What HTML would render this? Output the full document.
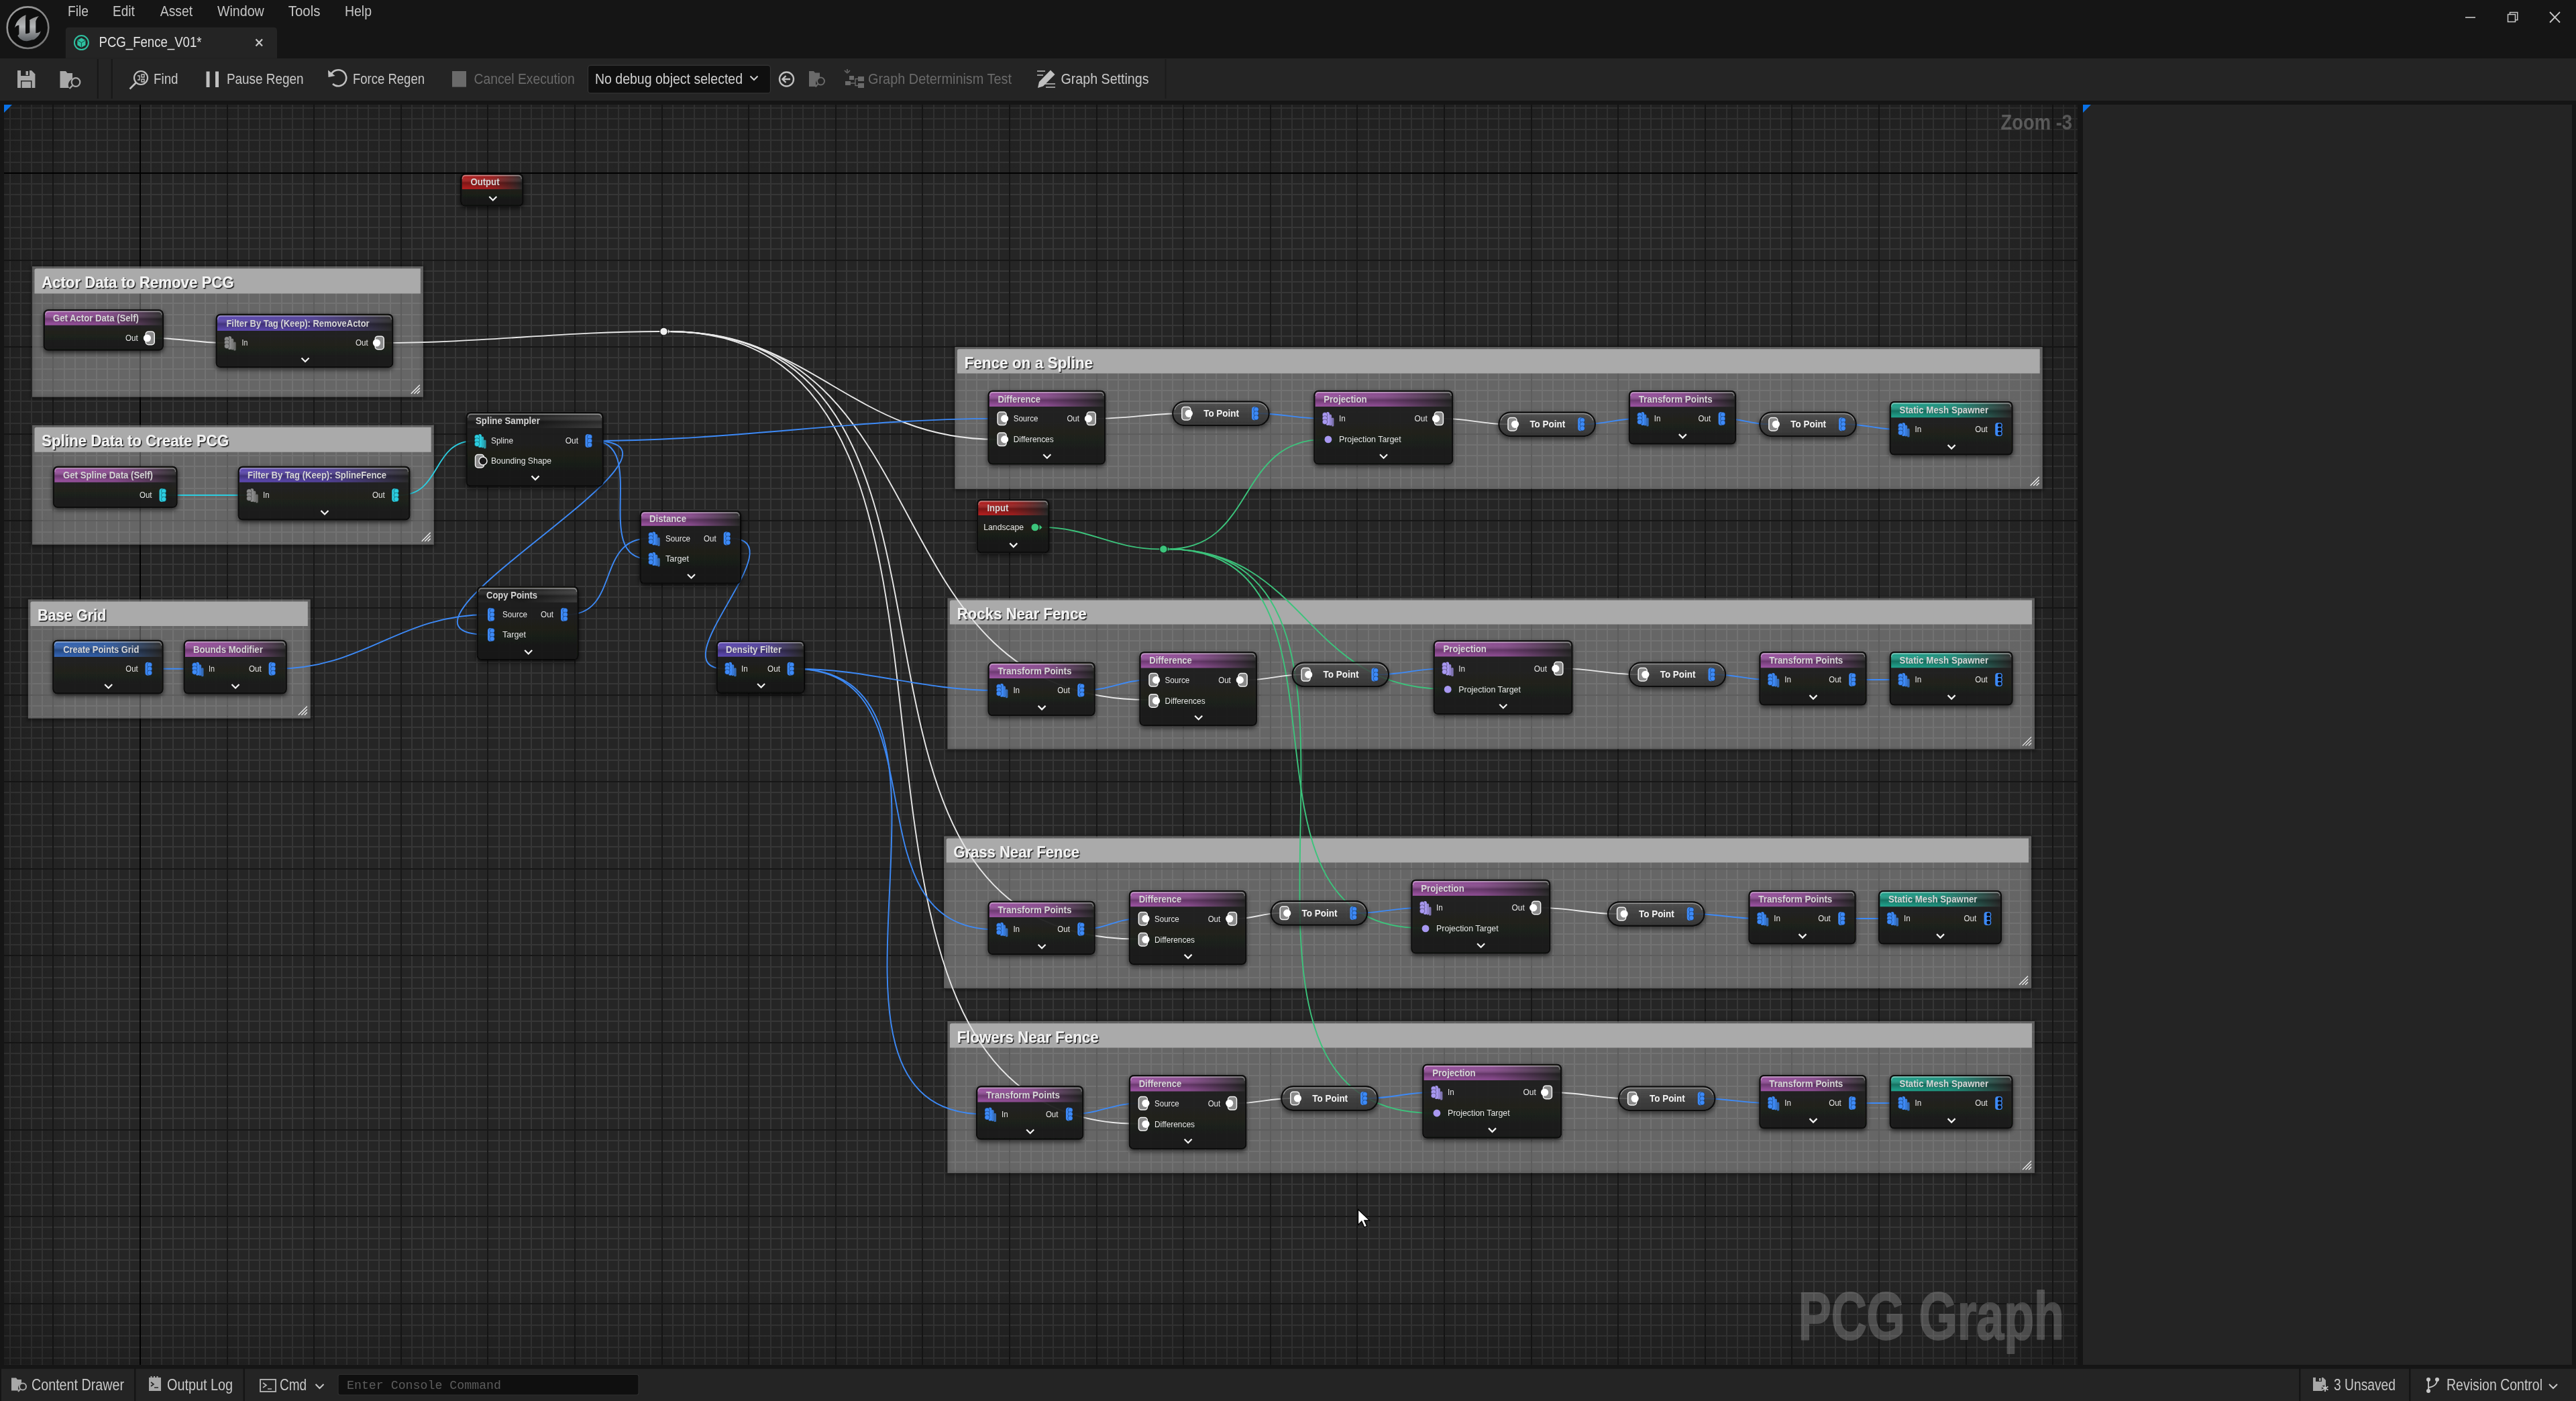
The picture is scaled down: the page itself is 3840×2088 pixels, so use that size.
<!DOCTYPE html>
<html><head><meta charset="utf-8"><title>PCG_Fence_V01</title>
<style>html,body{margin:0;padding:0;background:#151515;overflow:hidden}svg{display:block;will-change:transform}text{font-family:"Liberation Sans",sans-serif;white-space:pre}</style>
</head><body>
<svg width="3840" height="2088" viewBox="0 0 3840 2088">
<defs>
<radialGradient id="vign" cx="0.5" cy="0.5" r="0.75">
<stop offset="0.6" stop-color="#000" stop-opacity="0"/><stop offset="1" stop-color="#000" stop-opacity="0.25"/>
</radialGradient>
<filter id="nshadow" x="-20%" y="-30%" width="140%" height="170%"><feDropShadow dx="0" dy="3" stdDeviation="3.5" flood-color="#000" flood-opacity="0.75"/></filter>
<filter id="tshadow" x="-5%" y="-30%" width="110%" height="160%"><feDropShadow dx="1.5" dy="1.5" stdDeviation="0.6" flood-color="#000" flood-opacity="0.85"/></filter>
<filter id="gblur" x="-5%" y="-5%" width="110%" height="110%"><feGaussianBlur stdDeviation="2.5"/></filter>
<filter id="gshadow" x="-5%" y="-5%" width="110%" height="110%"><feDropShadow dx="0" dy="2" stdDeviation="3" flood-color="#000" flood-opacity="0.6"/></filter>
</defs>
<rect x="0.0" y="0.0" width="3840.0" height="2088.0" fill="#151515"/>
<rect x="0.0" y="87.0" width="3840.0" height="63.0" fill="#242424"/>
<path d="M97.8,86.7 V45.8 Q97.8,40.8 102.8,40.8 H408 Q413,40.8 413,45.8 V86.7 Z" fill="#242424"/>
<rect x="6.0" y="156.0" width="3091.0" height="1878.0" fill="#252525"/>
<path d="M14,156h2v1878h-2zM30,156h2v1878h-2zM46,156h2v1878h-2zM62,156h2v1878h-2zM95,156h2v1878h-2zM111,156h2v1878h-2zM127,156h2v1878h-2zM143,156h2v1878h-2zM159,156h2v1878h-2zM176,156h2v1878h-2zM192,156h2v1878h-2zM224,156h2v1878h-2zM240,156h2v1878h-2zM257,156h2v1878h-2zM273,156h2v1878h-2zM289,156h2v1878h-2zM305,156h2v1878h-2zM321,156h2v1878h-2zM354,156h2v1878h-2zM370,156h2v1878h-2zM386,156h2v1878h-2zM402,156h2v1878h-2zM419,156h2v1878h-2zM435,156h2v1878h-2zM451,156h2v1878h-2zM483,156h2v1878h-2zM500,156h2v1878h-2zM516,156h2v1878h-2zM532,156h2v1878h-2zM548,156h2v1878h-2zM564,156h2v1878h-2zM581,156h2v1878h-2zM613,156h2v1878h-2zM629,156h2v1878h-2zM645,156h2v1878h-2zM662,156h2v1878h-2zM678,156h2v1878h-2zM694,156h2v1878h-2zM710,156h2v1878h-2zM743,156h2v1878h-2zM759,156h2v1878h-2zM775,156h2v1878h-2zM791,156h2v1878h-2zM807,156h2v1878h-2zM824,156h2v1878h-2zM840,156h2v1878h-2zM872,156h2v1878h-2zM888,156h2v1878h-2zM905,156h2v1878h-2zM921,156h2v1878h-2zM937,156h2v1878h-2zM953,156h2v1878h-2zM969,156h2v1878h-2zM1002,156h2v1878h-2zM1018,156h2v1878h-2zM1034,156h2v1878h-2zM1050,156h2v1878h-2zM1067,156h2v1878h-2zM1083,156h2v1878h-2zM1099,156h2v1878h-2zM1131,156h2v1878h-2zM1148,156h2v1878h-2zM1164,156h2v1878h-2zM1180,156h2v1878h-2zM1196,156h2v1878h-2zM1212,156h2v1878h-2zM1229,156h2v1878h-2zM1261,156h2v1878h-2zM1277,156h2v1878h-2zM1293,156h2v1878h-2zM1310,156h2v1878h-2zM1326,156h2v1878h-2zM1342,156h2v1878h-2zM1358,156h2v1878h-2zM1391,156h2v1878h-2zM1407,156h2v1878h-2zM1423,156h2v1878h-2zM1439,156h2v1878h-2zM1455,156h2v1878h-2zM1472,156h2v1878h-2zM1488,156h2v1878h-2zM1520,156h2v1878h-2zM1536,156h2v1878h-2zM1553,156h2v1878h-2zM1569,156h2v1878h-2zM1585,156h2v1878h-2zM1601,156h2v1878h-2zM1617,156h2v1878h-2zM1650,156h2v1878h-2zM1666,156h2v1878h-2zM1682,156h2v1878h-2zM1698,156h2v1878h-2zM1715,156h2v1878h-2zM1731,156h2v1878h-2zM1747,156h2v1878h-2zM1779,156h2v1878h-2zM1796,156h2v1878h-2zM1812,156h2v1878h-2zM1828,156h2v1878h-2zM1844,156h2v1878h-2zM1860,156h2v1878h-2zM1877,156h2v1878h-2zM1909,156h2v1878h-2zM1925,156h2v1878h-2zM1941,156h2v1878h-2zM1958,156h2v1878h-2zM1974,156h2v1878h-2zM1990,156h2v1878h-2zM2006,156h2v1878h-2zM2039,156h2v1878h-2zM2055,156h2v1878h-2zM2071,156h2v1878h-2zM2087,156h2v1878h-2zM2103,156h2v1878h-2zM2120,156h2v1878h-2zM2136,156h2v1878h-2zM2168,156h2v1878h-2zM2184,156h2v1878h-2zM2201,156h2v1878h-2zM2217,156h2v1878h-2zM2233,156h2v1878h-2zM2249,156h2v1878h-2zM2265,156h2v1878h-2zM2298,156h2v1878h-2zM2314,156h2v1878h-2zM2330,156h2v1878h-2zM2346,156h2v1878h-2zM2363,156h2v1878h-2zM2379,156h2v1878h-2zM2395,156h2v1878h-2zM2427,156h2v1878h-2zM2444,156h2v1878h-2zM2460,156h2v1878h-2zM2476,156h2v1878h-2zM2492,156h2v1878h-2zM2508,156h2v1878h-2zM2525,156h2v1878h-2zM2557,156h2v1878h-2zM2573,156h2v1878h-2zM2589,156h2v1878h-2zM2606,156h2v1878h-2zM2622,156h2v1878h-2zM2638,156h2v1878h-2zM2654,156h2v1878h-2zM2687,156h2v1878h-2zM2703,156h2v1878h-2zM2719,156h2v1878h-2zM2735,156h2v1878h-2zM2751,156h2v1878h-2zM2768,156h2v1878h-2zM2784,156h2v1878h-2zM2816,156h2v1878h-2zM2832,156h2v1878h-2zM2849,156h2v1878h-2zM2865,156h2v1878h-2zM2881,156h2v1878h-2zM2897,156h2v1878h-2zM2913,156h2v1878h-2zM2946,156h2v1878h-2zM2962,156h2v1878h-2zM2978,156h2v1878h-2zM2994,156h2v1878h-2zM3011,156h2v1878h-2zM3027,156h2v1878h-2zM3043,156h2v1878h-2zM3075,156h2v1878h-2zM3092,156h2v1878h-2zM6,160h3091v2h-3091zM6,176h3091v2h-3091zM6,192h3091v2h-3091zM6,208h3091v2h-3091zM6,225h3091v2h-3091zM6,241h3091v2h-3091zM6,273h3091v2h-3091zM6,289h3091v2h-3091zM6,306h3091v2h-3091zM6,322h3091v2h-3091zM6,338h3091v2h-3091zM6,354h3091v2h-3091zM6,370h3091v2h-3091zM6,403h3091v2h-3091zM6,419h3091v2h-3091zM6,435h3091v2h-3091zM6,451h3091v2h-3091zM6,468h3091v2h-3091zM6,484h3091v2h-3091zM6,500h3091v2h-3091zM6,532h3091v2h-3091zM6,549h3091v2h-3091zM6,565h3091v2h-3091zM6,581h3091v2h-3091zM6,597h3091v2h-3091zM6,613h3091v2h-3091zM6,630h3091v2h-3091zM6,662h3091v2h-3091zM6,678h3091v2h-3091zM6,694h3091v2h-3091zM6,711h3091v2h-3091zM6,727h3091v2h-3091zM6,743h3091v2h-3091zM6,759h3091v2h-3091zM6,792h3091v2h-3091zM6,808h3091v2h-3091zM6,824h3091v2h-3091zM6,840h3091v2h-3091zM6,856h3091v2h-3091zM6,873h3091v2h-3091zM6,889h3091v2h-3091zM6,921h3091v2h-3091zM6,937h3091v2h-3091zM6,954h3091v2h-3091zM6,970h3091v2h-3091zM6,986h3091v2h-3091zM6,1002h3091v2h-3091zM6,1018h3091v2h-3091zM6,1051h3091v2h-3091zM6,1067h3091v2h-3091zM6,1083h3091v2h-3091zM6,1099h3091v2h-3091zM6,1116h3091v2h-3091zM6,1132h3091v2h-3091zM6,1148h3091v2h-3091zM6,1180h3091v2h-3091zM6,1197h3091v2h-3091zM6,1213h3091v2h-3091zM6,1229h3091v2h-3091zM6,1245h3091v2h-3091zM6,1261h3091v2h-3091zM6,1278h3091v2h-3091zM6,1310h3091v2h-3091zM6,1326h3091v2h-3091zM6,1342h3091v2h-3091zM6,1359h3091v2h-3091zM6,1375h3091v2h-3091zM6,1391h3091v2h-3091zM6,1407h3091v2h-3091zM6,1440h3091v2h-3091zM6,1456h3091v2h-3091zM6,1472h3091v2h-3091zM6,1488h3091v2h-3091zM6,1504h3091v2h-3091zM6,1521h3091v2h-3091zM6,1537h3091v2h-3091zM6,1569h3091v2h-3091zM6,1585h3091v2h-3091zM6,1602h3091v2h-3091zM6,1618h3091v2h-3091zM6,1634h3091v2h-3091zM6,1650h3091v2h-3091zM6,1666h3091v2h-3091zM6,1699h3091v2h-3091zM6,1715h3091v2h-3091zM6,1731h3091v2h-3091zM6,1747h3091v2h-3091zM6,1764h3091v2h-3091zM6,1780h3091v2h-3091zM6,1796h3091v2h-3091zM6,1828h3091v2h-3091zM6,1845h3091v2h-3091zM6,1861h3091v2h-3091zM6,1877h3091v2h-3091zM6,1893h3091v2h-3091zM6,1909h3091v2h-3091zM6,1926h3091v2h-3091zM6,1958h3091v2h-3091zM6,1974h3091v2h-3091zM6,1990h3091v2h-3091zM6,2007h3091v2h-3091zM6,2023h3091v2h-3091z" fill="#363636"/>
<path d="M78,156h2v1878h-2zM338,156h2v1878h-2zM467,156h2v1878h-2zM597,156h2v1878h-2zM726,156h2v1878h-2zM856,156h2v1878h-2zM986,156h2v1878h-2zM1115,156h2v1878h-2zM1245,156h2v1878h-2zM1374,156h2v1878h-2zM1504,156h2v1878h-2zM1634,156h2v1878h-2zM1763,156h2v1878h-2zM1893,156h2v1878h-2zM2022,156h2v1878h-2zM2152,156h2v1878h-2zM2282,156h2v1878h-2zM2411,156h2v1878h-2zM2541,156h2v1878h-2zM2670,156h2v1878h-2zM2800,156h2v1878h-2zM2930,156h2v1878h-2zM3059,156h2v1878h-2zM6,387h3091v2h-3091zM6,516h3091v2h-3091zM6,646h3091v2h-3091zM6,775h3091v2h-3091zM6,905h3091v2h-3091zM6,1035h3091v2h-3091zM6,1164h3091v2h-3091zM6,1294h3091v2h-3091zM6,1423h3091v2h-3091zM6,1553h3091v2h-3091zM6,1683h3091v2h-3091zM6,1812h3091v2h-3091zM6,1942h3091v2h-3091z" fill="#171717"/>
<path d="M208,156h2v1878h-2zM6,257h3091v2h-3091z" fill="#000000"/>
<rect x="3105.0" y="156.0" width="729.0" height="1878.0" fill="#242424"/>
<rect x="2.0" y="2040.0" width="3838.0" height="48.0" fill="#242424"/>
<defs><linearGradient id="hg_mag" x1="0" y1="0" x2="1" y2="0"><stop offset="0" stop-color="#9a52a0"/><stop offset="0.5" stop-color="#9a52a0" stop-opacity="0.85"/><stop offset="1" stop-color="#2c2c2c"/></linearGradient><linearGradient id="hg_ind" x1="0" y1="0" x2="1" y2="0"><stop offset="0" stop-color="#5c48b0"/><stop offset="0.5" stop-color="#5c48b0" stop-opacity="0.85"/><stop offset="1" stop-color="#2c2c2c"/></linearGradient><linearGradient id="hg_blue" x1="0" y1="0" x2="1" y2="0"><stop offset="0" stop-color="#3364b4"/><stop offset="0.5" stop-color="#3364b4" stop-opacity="0.85"/><stop offset="1" stop-color="#2c2c2c"/></linearGradient><linearGradient id="hg_teal" x1="0" y1="0" x2="1" y2="0"><stop offset="0" stop-color="#1fa08a"/><stop offset="0.5" stop-color="#1fa08a" stop-opacity="0.85"/><stop offset="1" stop-color="#2c2c2c"/></linearGradient><linearGradient id="hg_red" x1="0" y1="0" x2="1" y2="0"><stop offset="0" stop-color="#b01e1e"/><stop offset="0.5" stop-color="#b01e1e" stop-opacity="0.85"/><stop offset="1" stop-color="#2c2c2c"/></linearGradient><linearGradient id="hg_grey" x1="0" y1="0" x2="1" y2="0"><stop offset="0" stop-color="#262626"/><stop offset="0.45" stop-color="#1c1c1c"/><stop offset="1" stop-color="#3c3c3c"/></linearGradient><linearGradient id="hgv" x1="0" y1="0" x2="0" y2="1"><stop offset="0" stop-color="#fff" stop-opacity="0.25"/><stop offset="0.15" stop-color="#fff" stop-opacity="0"/><stop offset="0.55" stop-color="#000" stop-opacity="0.28"/><stop offset="0.9" stop-color="#000" stop-opacity="0.02"/><stop offset="1" stop-color="#000" stop-opacity="0"/></linearGradient><linearGradient id="nbody" x1="0" y1="0" x2="0" y2="1"><stop offset="0" stop-color="#222320"/><stop offset="1" stop-color="#181917"/></linearGradient><linearGradient id="tpbody" x1="0" y1="0" x2="0" y2="1"><stop offset="0" stop-color="#565656"/><stop offset="0.5" stop-color="#3e3e3e"/><stop offset="1" stop-color="#303030"/></linearGradient></defs>
<defs><linearGradient id="shL" x1="0" y1="0" x2="1" y2="0"><stop offset="0" stop-color="#000" stop-opacity="0.14"/><stop offset="1" stop-color="#000" stop-opacity="0"/></linearGradient><linearGradient id="shR" x1="1" y1="0" x2="0" y2="0"><stop offset="0" stop-color="#000" stop-opacity="0.16"/><stop offset="1" stop-color="#000" stop-opacity="0"/></linearGradient><linearGradient id="shT" x1="0" y1="0" x2="0" y2="1"><stop offset="0" stop-color="#000" stop-opacity="0.14"/><stop offset="1" stop-color="#000" stop-opacity="0"/></linearGradient><linearGradient id="shB" x1="0" y1="1" x2="0" y2="0"><stop offset="0" stop-color="#000" stop-opacity="0.18"/><stop offset="1" stop-color="#000" stop-opacity="0"/></linearGradient></defs>
<rect x="6.0" y="156.0" width="124.0" height="1877.5" fill="url(#shL)"/>
<rect x="2960.0" y="156.0" width="137.0" height="1877.5" fill="url(#shR)"/>
<rect x="6.0" y="156.0" width="3091.0" height="134.0" fill="url(#shT)"/>
<rect x="6.0" y="1900.0" width="3091.0" height="133.5" fill="url(#shB)"/>
<rect x="48.5" y="398.5" width="581.8" height="193.7" fill="none" stroke="#000" stroke-opacity="0.45" stroke-width="5" filter="url(#gblur)"/>
<rect x="48.0" y="397.0" width="582.8" height="194.7" fill="#ffffff" fill-opacity="0.30"/>
<path d="M51.5,437.6 V403.0 Q51.5,400.2 54.3,400.2 H626.8 V437.6 Z" fill="#aaaaaa"/>
<text x="62.0" y="428.8" font-size="24.27" font-weight="700" fill="#f2f2f2" textLength="286.6" lengthAdjust="spacingAndGlyphs" filter="url(#tshadow)">Actor Data to Remove PCG</text>
<path d="M612.8,586.7 L625.8,573.7 M617.3,586.7 L625.8,578.2 M621.8,586.7 L625.8,582.7" stroke="#f0f0f0" stroke-width="1.3"/>
<rect x="48.5" y="635.0" width="597.7" height="177.2" fill="none" stroke="#000" stroke-opacity="0.45" stroke-width="5" filter="url(#gblur)"/>
<rect x="48.0" y="633.5" width="598.7" height="178.2" fill="#ffffff" fill-opacity="0.30"/>
<path d="M51.5,673.8 V639.5 Q51.5,636.7 54.3,636.7 H642.7 V673.8 Z" fill="#aaaaaa"/>
<text x="62.0" y="665.3" font-size="24.27" font-weight="700" fill="#f2f2f2" textLength="279.0" lengthAdjust="spacingAndGlyphs" filter="url(#tshadow)">Spline Data to Create PCG</text>
<path d="M628.7,806.7 L641.7,793.7 M633.2,806.7 L641.7,798.2 M637.7,806.7 L641.7,802.7" stroke="#f0f0f0" stroke-width="1.3"/>
<rect x="42.4" y="894.9" width="419.9" height="176.3" fill="none" stroke="#000" stroke-opacity="0.45" stroke-width="5" filter="url(#gblur)"/>
<rect x="41.9" y="893.4" width="420.9" height="177.3" fill="#ffffff" fill-opacity="0.30"/>
<path d="M45.4,933.0 V899.4 Q45.4,896.6 48.2,896.6 H458.8 V933.0 Z" fill="#aaaaaa"/>
<text x="55.9" y="925.2" font-size="24.27" font-weight="700" fill="#f2f2f2" textLength="102.3" lengthAdjust="spacingAndGlyphs" filter="url(#tshadow)">Base Grid</text>
<path d="M444.8,1065.7 L457.8,1052.7 M449.3,1065.7 L457.8,1057.2 M453.8,1065.7 L457.8,1061.7" stroke="#f0f0f0" stroke-width="1.3"/>
<rect x="1424.0" y="518.5" width="1620.2" height="210.7" fill="none" stroke="#000" stroke-opacity="0.45" stroke-width="5" filter="url(#gblur)"/>
<rect x="1423.5" y="517.0" width="1621.2" height="211.7" fill="#ffffff" fill-opacity="0.30"/>
<path d="M1427.0,556.4 V523.0 Q1427.0,520.2 1429.8,520.2 H3040.7 V556.4 Z" fill="#aaaaaa"/>
<text x="1437.5" y="548.8" font-size="24.27" font-weight="700" fill="#f2f2f2" textLength="191.5" lengthAdjust="spacingAndGlyphs" filter="url(#tshadow)">Fence on a Spline</text>
<path d="M3026.7,723.7 L3039.7,710.7 M3031.2,723.7 L3039.7,715.2 M3035.7,723.7 L3039.7,719.7" stroke="#f0f0f0" stroke-width="1.3"/>
<rect x="1412.9" y="892.9" width="1619.6" height="224.0" fill="none" stroke="#000" stroke-opacity="0.45" stroke-width="5" filter="url(#gblur)"/>
<rect x="1412.4" y="891.4" width="1620.6" height="225.0" fill="#ffffff" fill-opacity="0.30"/>
<path d="M1415.9,930.5 V897.4 Q1415.9,894.6 1418.7,894.6 H3029.0 V930.5 Z" fill="#aaaaaa"/>
<text x="1426.4" y="923.2" font-size="24.27" font-weight="700" fill="#f2f2f2" textLength="193.3" lengthAdjust="spacingAndGlyphs" filter="url(#tshadow)">Rocks Near Fence</text>
<path d="M3015.0,1111.4 L3028.0,1098.4 M3019.5,1111.4 L3028.0,1102.9 M3024.0,1111.4 L3028.0,1107.4" stroke="#f0f0f0" stroke-width="1.3"/>
<rect x="1407.7" y="1247.8" width="1619.8" height="225.5" fill="none" stroke="#000" stroke-opacity="0.45" stroke-width="5" filter="url(#gblur)"/>
<rect x="1407.2" y="1246.3" width="1620.8" height="226.5" fill="#ffffff" fill-opacity="0.30"/>
<path d="M1410.7,1285.6 V1252.3 Q1410.7,1249.5 1413.5,1249.5 H3024.0 V1285.6 Z" fill="#aaaaaa"/>
<text x="1421.2" y="1278.1" font-size="24.27" font-weight="700" fill="#f2f2f2" textLength="187.8" lengthAdjust="spacingAndGlyphs" filter="url(#tshadow)">Grass Near Fence</text>
<path d="M3010.0,1467.8 L3023.0,1454.8 M3014.5,1467.8 L3023.0,1459.3 M3019.0,1467.8 L3023.0,1463.8" stroke="#f0f0f0" stroke-width="1.3"/>
<rect x="1412.9" y="1523.5" width="1619.6" height="225.2" fill="none" stroke="#000" stroke-opacity="0.45" stroke-width="5" filter="url(#gblur)"/>
<rect x="1412.4" y="1522.0" width="1620.6" height="226.2" fill="#ffffff" fill-opacity="0.30"/>
<path d="M1415.9,1561.5 V1528.0 Q1415.9,1525.2 1418.7,1525.2 H3029.0 V1561.5 Z" fill="#aaaaaa"/>
<text x="1426.4" y="1553.8" font-size="24.27" font-weight="700" fill="#f2f2f2" textLength="211.3" lengthAdjust="spacingAndGlyphs" filter="url(#tshadow)">Flowers Near Fence</text>
<path d="M3015.0,1743.2 L3028.0,1730.2 M3019.5,1743.2 L3028.0,1734.7 M3024.0,1743.2 L3028.0,1739.2" stroke="#f0f0f0" stroke-width="1.3"/>
<path d="M231.0,504.0 C267.8,504.0 297.6,511.0 334.4,511.0" fill="none" stroke="#e8e8e8" stroke-width="1.9"/>
<path d="M573.0,511.0 C715.5,511.0 841.0,494.0 983.5,494.0" fill="none" stroke="#e8e8e8" stroke-width="1.9"/>
<path d="M995.5,494.0 C1212.6,494.0 1268.9,654.9 1486.0,654.9" fill="none" stroke="#e8e8e8" stroke-width="1.9"/>
<path d="M995.5,494.0 C1417.2,494.0 1289.8,1043.0 1711.5,1043.0" fill="none" stroke="#e8e8e8" stroke-width="1.9"/>
<path d="M995.5,494.0 C1530.8,494.0 1160.7,1399.5 1696.0,1399.5" fill="none" stroke="#e8e8e8" stroke-width="1.9"/>
<path d="M995.5,494.0 C1562.3,494.0 1129.2,1674.7 1696.0,1674.7" fill="none" stroke="#e8e8e8" stroke-width="1.9"/>
<path d="M248.7,738.0 C288.3,738.0 327.9,738.0 367.5,738.0" fill="none" stroke="#2ccde0" stroke-width="1.9"/>
<path d="M595.0,738.0 C659.4,738.0 642.9,657.0 707.3,657.0" fill="none" stroke="#2ccde0" stroke-width="1.9"/>
<path d="M227.0,996.8 C246.8,996.8 266.5,996.8 286.3,996.8" fill="none" stroke="#3d8af7" stroke-width="1.9"/>
<path d="M411.3,996.8 C543.5,996.8 594.8,916.0 727.0,916.0" fill="none" stroke="#3d8af7" stroke-width="1.9"/>
<path d="M883.0,657.0 C1087.0,657.0 523.0,946.0 727.0,946.0" fill="none" stroke="#3d8af7" stroke-width="1.9"/>
<path d="M883.0,657.0 C969.5,657.0 880.0,833.0 966.5,833.0" fill="none" stroke="#3d8af7" stroke-width="1.9"/>
<path d="M883.0,657.0 C1095.0,657.0 1274.0,623.9 1486.0,623.9" fill="none" stroke="#3d8af7" stroke-width="1.9"/>
<path d="M846.0,916.0 C924.0,916.0 888.5,802.5 966.5,802.5" fill="none" stroke="#3d8af7" stroke-width="1.9"/>
<path d="M1089.0,802.5 C1191.8,802.5 977.6,996.7 1080.4,996.7" fill="none" stroke="#3d8af7" stroke-width="1.9"/>
<path d="M1184.0,996.7 C1295.2,996.7 1374.2,1029.0 1485.4,1029.0" fill="none" stroke="#3d8af7" stroke-width="1.9"/>
<path d="M1184.0,996.7 C1414.1,996.7 1255.3,1385.5 1485.4,1385.5" fill="none" stroke="#3d8af7" stroke-width="1.9"/>
<path d="M1184.0,996.7 C1500.0,996.7 1152.0,1660.6 1468.0,1660.6" fill="none" stroke="#3d8af7" stroke-width="1.9"/>
<path d="M1553.0,785.9 C1622.3,785.9 1659.1,818.4 1728.4,818.4" fill="none" stroke="#3cc47c" stroke-width="1.9"/>
<path d="M1740.4,818.4 C1872.9,818.4 1842.0,654.9 1974.5,654.9" fill="none" stroke="#3cc47c" stroke-width="1.9"/>
<path d="M1740.4,818.4 C1947.3,818.4 1945.9,1026.7 2152.8,1026.7" fill="none" stroke="#3cc47c" stroke-width="1.9"/>
<path d="M1740.4,818.4 C2055.1,818.4 1804.9,1383.2 2119.6,1383.2" fill="none" stroke="#3cc47c" stroke-width="1.9"/>
<path d="M1740.4,818.4 C2152.6,818.4 1724.3,1659.0 2136.5,1659.0" fill="none" stroke="#3cc47c" stroke-width="1.9"/>
<path d="M1634.0,623.9 C1678.9,623.9 1716.1,616.3 1761.0,616.3" fill="none" stroke="#e8e8e8" stroke-width="1.9"/>
<path d="M1876.2,616.3 C1910.4,616.3 1937.0,623.9 1971.2,623.9" fill="none" stroke="#3d8af7" stroke-width="1.9"/>
<path d="M2152.2,623.9 C2186.7,623.9 2212.7,632.3 2247.2,632.3" fill="none" stroke="#e8e8e8" stroke-width="1.9"/>
<path d="M2362.4,632.3 C2391.2,632.3 2411.7,624.0 2440.5,624.0" fill="none" stroke="#3d8af7" stroke-width="1.9"/>
<path d="M2571.5,624.0 C2595.8,624.0 2611.8,632.3 2636.1,632.3" fill="none" stroke="#3d8af7" stroke-width="1.9"/>
<path d="M2751.3,632.3 C2779.9,632.3 2800.8,640.0 2829.4,640.0" fill="none" stroke="#3d8af7" stroke-width="1.9"/>
<path d="M1616.2,1028.8 C1653.3,1028.8 1675.1,1013.4 1712.2,1013.4" fill="none" stroke="#3d8af7" stroke-width="1.9"/>
<path d="M1859.9,1013.4 C1889.1,1013.4 1910.2,1005.4 1939.4,1005.4" fill="none" stroke="#e8e8e8" stroke-width="1.9"/>
<path d="M2054.6,1005.4 C2089.2,1005.4 2114.9,996.4 2149.5,996.4" fill="none" stroke="#3d8af7" stroke-width="1.9"/>
<path d="M2330.5,996.4 C2370.5,996.4 2401.5,1005.3 2441.5,1005.3" fill="none" stroke="#e8e8e8" stroke-width="1.9"/>
<path d="M2556.7,1005.3 C2585.4,1005.3 2606.4,1013.0 2635.1,1013.0" fill="none" stroke="#3d8af7" stroke-width="1.9"/>
<path d="M2766.1,1013.0 C2787.2,1013.0 2808.3,1013.0 2829.4,1013.0" fill="none" stroke="#3d8af7" stroke-width="1.9"/>
<path d="M1616.2,1384.7 C1648.2,1384.7 1664.6,1369.2 1696.6,1369.2" fill="none" stroke="#3d8af7" stroke-width="1.9"/>
<path d="M1844.3,1369.2 C1868.1,1369.2 1883.6,1360.9 1907.4,1360.9" fill="none" stroke="#e8e8e8" stroke-width="1.9"/>
<path d="M2022.6,1360.9 C2056.5,1360.9 2082.4,1352.9 2116.3,1352.9" fill="none" stroke="#3d8af7" stroke-width="1.9"/>
<path d="M2297.3,1352.9 C2337.8,1352.9 2369.3,1362.0 2409.8,1362.0" fill="none" stroke="#e8e8e8" stroke-width="1.9"/>
<path d="M2525.0,1362.0 C2558.7,1362.0 2585.4,1369.0 2619.1,1369.0" fill="none" stroke="#3d8af7" stroke-width="1.9"/>
<path d="M2750.1,1369.0 C2771.0,1369.0 2791.9,1369.0 2812.8,1369.0" fill="none" stroke="#3d8af7" stroke-width="1.9"/>
<path d="M1598.8,1660.4 C1636.8,1660.4 1658.6,1644.3 1696.6,1644.3" fill="none" stroke="#3d8af7" stroke-width="1.9"/>
<path d="M1844.3,1644.3 C1873.0,1644.3 1894.4,1637.0 1923.1,1637.0" fill="none" stroke="#e8e8e8" stroke-width="1.9"/>
<path d="M2038.3,1637.0 C2072.9,1637.0 2098.6,1628.0 2133.2,1628.0" fill="none" stroke="#3d8af7" stroke-width="1.9"/>
<path d="M2314.2,1628.0 C2354.5,1628.0 2385.5,1637.3 2425.8,1637.3" fill="none" stroke="#e8e8e8" stroke-width="1.9"/>
<path d="M2541.0,1637.3 C2574.6,1637.3 2601.5,1644.0 2635.1,1644.0" fill="none" stroke="#3d8af7" stroke-width="1.9"/>
<path d="M2766.1,1644.0 C2787.2,1644.0 2808.3,1644.0 2829.4,1644.0" fill="none" stroke="#3d8af7" stroke-width="1.9"/>
<circle cx="989.5" cy="494.0" r="5.6" fill="#f0f0f0" stroke="#101010" stroke-opacity="0.7" stroke-width="1"/><path d="M995.7,490.2 L999.1,494.0 L995.7,497.8 Z" fill="#f0f0f0" stroke="#101010" stroke-opacity="0.6" stroke-width="0.8"/>
<circle cx="1734.4" cy="818.4" r="5.6" fill="#3cc47c" stroke="#101010" stroke-opacity="0.7" stroke-width="1"/><path d="M1740.6,814.6 L1744.0,818.4 L1740.6,822.2 Z" fill="#3cc47c" stroke="#101010" stroke-opacity="0.6" stroke-width="0.8"/>
<rect x="687.3" y="259.3" width="92.0" height="47.2" rx="6" fill="url(#nbody)" fill-opacity="0.85" stroke="#080808" stroke-width="1.7" filter="url(#nshadow)"/>
<path d="M688.8,282.0 V265.8 Q688.8,260.8 693.8,260.8 H772.8 Q777.8,260.8 777.8,265.8 V282.0 Z" fill="url(#hg_red)"/>
<path d="M688.8,282.0 V265.8 Q688.8,260.8 693.8,260.8 H772.8 Q777.8,260.8 777.8,265.8 V282.0 Z" fill="url(#hgv)"/>
<path d="M689.3,266.8 Q689.3,261.6 694.8,261.6 H771.8 Q777.3,261.6 777.3,266.8" fill="none" stroke="#ffffff" stroke-opacity="0.35" stroke-width="1.2"/>
<text x="701.5" y="276.0" font-size="14.97" font-weight="700" fill="#d6d6d6" textLength="43.0" lengthAdjust="spacingAndGlyphs">Output</text>
<path d="M729.3,293.0 L734.8,298.5 L740.3,293.0" fill="none" stroke="#f4f4f4" stroke-width="2.2"/>
<rect x="65.6" y="462.0" width="177.4" height="59.6" rx="6" fill="url(#nbody)" fill-opacity="0.85" stroke="#080808" stroke-width="1.7" filter="url(#nshadow)"/>
<path d="M67.1,484.8 V468.5 Q67.1,463.5 72.1,463.5 H236.5 Q241.5,463.5 241.5,468.5 V484.8 Z" fill="url(#hg_mag)"/>
<path d="M67.1,484.8 V468.5 Q67.1,463.5 72.1,463.5 H236.5 Q241.5,463.5 241.5,468.5 V484.8 Z" fill="url(#hgv)"/>
<path d="M67.6,469.5 Q67.6,464.3 73.1,464.3 H235.5 Q241.0,464.3 241.0,469.5" fill="none" stroke="#ffffff" stroke-opacity="0.35" stroke-width="1.2"/>
<text x="79.0" y="479.4" font-size="14.97" font-weight="700" fill="#d6d6d6" textLength="128.0" lengthAdjust="spacingAndGlyphs">Get Actor Data (Self)</text>
<text x="187.0" y="508.2" font-size="12.79" fill="#e6e6e6" textLength="18.7" lengthAdjust="spacingAndGlyphs">Out</text>
<rect x="217.2" y="494.2" width="13" height="19.5" rx="4" fill="#8a8a8a" stroke="#f2f2f2" stroke-width="1.5"/>
<circle cx="219.4" cy="504.0" r="5.6" fill="#ffffff"/>
<rect x="322.5" y="468.7" width="262.8" height="78.3" rx="6" fill="url(#nbody)" fill-opacity="0.85" stroke="#080808" stroke-width="1.7" filter="url(#nshadow)"/>
<path d="M324.0,493.0 V475.2 Q324.0,470.2 329.0,470.2 H578.8 Q583.8,470.2 583.8,475.2 V493.0 Z" fill="url(#hg_ind)"/>
<path d="M324.0,493.0 V475.2 Q324.0,470.2 329.0,470.2 H578.8 Q583.8,470.2 583.8,475.2 V493.0 Z" fill="url(#hgv)"/>
<path d="M324.5,476.2 Q324.5,471.0 330.0,471.0 H577.8 Q583.3,471.0 583.3,476.2" fill="none" stroke="#ffffff" stroke-opacity="0.35" stroke-width="1.2"/>
<text x="337.4" y="487.3" font-size="14.97" font-weight="700" fill="#d6d6d6" textLength="213.2" lengthAdjust="spacingAndGlyphs">Filter By Tag (Keep): RemoveActor</text>
<rect x="348.0" y="509.5" width="3.6" height="13" rx="1.5" fill="#8c8c8c" fill-opacity="0.7"/>
<rect x="344.2" y="504.5" width="4" height="17" rx="2" fill="#8c8c8c" fill-opacity="0.85"/>
<rect x="340.0" y="501.0" width="5" height="20" rx="2.5" fill="#8c8c8c"/>
<circle cx="338.2" cy="505.5" r="3.8" fill="#8c8c8c" stroke="#000" stroke-opacity="0.45" stroke-width="0.8"/>
<circle cx="338.2" cy="510.5" r="3.8" fill="#8c8c8c" stroke="#000" stroke-opacity="0.45" stroke-width="0.8"/>
<circle cx="338.2" cy="515.8" r="3.8" fill="#8c8c8c" stroke="#000" stroke-opacity="0.45" stroke-width="0.8"/>
<text x="360.5" y="515.4" font-size="12.79" fill="#e6e6e6" textLength="8.7" lengthAdjust="spacingAndGlyphs">In</text>
<text x="530.0" y="515.4" font-size="12.79" fill="#e6e6e6" textLength="18.8" lengthAdjust="spacingAndGlyphs">Out</text>
<rect x="559.2" y="501.2" width="13" height="19.5" rx="4" fill="#8a8a8a" stroke="#f2f2f2" stroke-width="1.5"/>
<circle cx="561.4" cy="511.0" r="5.6" fill="#ffffff"/>
<path d="M449.5,533.5 L455.0,539.0 L460.5,533.5" fill="none" stroke="#f4f4f4" stroke-width="2.2"/>
<rect x="79.8" y="695.7" width="183.8" height="60.1" rx="6" fill="url(#nbody)" fill-opacity="0.85" stroke="#080808" stroke-width="1.7" filter="url(#nshadow)"/>
<path d="M81.3,718.8 V702.2 Q81.3,697.2 86.3,697.2 H257.1 Q262.1,697.2 262.1,702.2 V718.8 Z" fill="url(#hg_mag)"/>
<path d="M81.3,718.8 V702.2 Q81.3,697.2 86.3,697.2 H257.1 Q262.1,697.2 262.1,702.2 V718.8 Z" fill="url(#hgv)"/>
<path d="M81.8,703.2 Q81.8,698.0 87.3,698.0 H256.1 Q261.6,698.0 261.6,703.2" fill="none" stroke="#ffffff" stroke-opacity="0.35" stroke-width="1.2"/>
<text x="94.0" y="713.2" font-size="14.97" font-weight="700" fill="#d6d6d6" textLength="134.0" lengthAdjust="spacingAndGlyphs">Get Spline Data (Self)</text>
<text x="208.0" y="742.4" font-size="12.79" fill="#e6e6e6" textLength="18.5" lengthAdjust="spacingAndGlyphs">Out</text>
<rect x="237.5" y="728.0" width="8" height="20" rx="4" fill="#2ccde0"/>
<circle cx="244.1" cy="732.0" r="3.7" fill="#2ccde0" stroke="#000" stroke-opacity="0.45" stroke-width="0.8"/>
<circle cx="244.1" cy="738.0" r="3.7" fill="#2ccde0" stroke="#000" stroke-opacity="0.45" stroke-width="0.8"/>
<circle cx="244.1" cy="744.0" r="3.7" fill="#2ccde0" stroke="#000" stroke-opacity="0.45" stroke-width="0.8"/>
<rect x="355.5" y="695.7" width="254.9" height="78.7" rx="6" fill="url(#nbody)" fill-opacity="0.85" stroke="#080808" stroke-width="1.7" filter="url(#nshadow)"/>
<path d="M357.0,718.8 V702.2 Q357.0,697.2 362.0,697.2 H603.9 Q608.9,697.2 608.9,702.2 V718.8 Z" fill="url(#hg_ind)"/>
<path d="M357.0,718.8 V702.2 Q357.0,697.2 362.0,697.2 H603.9 Q608.9,697.2 608.9,702.2 V718.8 Z" fill="url(#hgv)"/>
<path d="M357.5,703.2 Q357.5,698.0 363.0,698.0 H602.9 Q608.4,698.0 608.4,703.2" fill="none" stroke="#ffffff" stroke-opacity="0.35" stroke-width="1.2"/>
<text x="369.0" y="713.2" font-size="14.97" font-weight="700" fill="#d6d6d6" textLength="207.0" lengthAdjust="spacingAndGlyphs">Filter By Tag (Keep): SplineFence</text>
<rect x="381.1" y="736.5" width="3.6" height="13" rx="1.5" fill="#8c8c8c" fill-opacity="0.7"/>
<rect x="377.3" y="731.5" width="4" height="17" rx="2" fill="#8c8c8c" fill-opacity="0.85"/>
<rect x="373.1" y="728.0" width="5" height="20" rx="2.5" fill="#8c8c8c"/>
<circle cx="371.3" cy="732.5" r="3.8" fill="#8c8c8c" stroke="#000" stroke-opacity="0.45" stroke-width="0.8"/>
<circle cx="371.3" cy="737.5" r="3.8" fill="#8c8c8c" stroke="#000" stroke-opacity="0.45" stroke-width="0.8"/>
<circle cx="371.3" cy="742.8" r="3.8" fill="#8c8c8c" stroke="#000" stroke-opacity="0.45" stroke-width="0.8"/>
<text x="392.0" y="742.4" font-size="12.79" fill="#e6e6e6" textLength="9.5" lengthAdjust="spacingAndGlyphs">In</text>
<text x="555.0" y="742.4" font-size="12.79" fill="#e6e6e6" textLength="18.7" lengthAdjust="spacingAndGlyphs">Out</text>
<rect x="584.2" y="728.0" width="8" height="20" rx="4" fill="#2ccde0"/>
<circle cx="590.8" cy="732.0" r="3.7" fill="#2ccde0" stroke="#000" stroke-opacity="0.45" stroke-width="0.8"/>
<circle cx="590.8" cy="738.0" r="3.7" fill="#2ccde0" stroke="#000" stroke-opacity="0.45" stroke-width="0.8"/>
<circle cx="590.8" cy="744.0" r="3.7" fill="#2ccde0" stroke="#000" stroke-opacity="0.45" stroke-width="0.8"/>
<path d="M478.5,761.0 L484.0,766.5 L489.5,761.0" fill="none" stroke="#f4f4f4" stroke-width="2.2"/>
<rect x="695.5" y="615.0" width="203.1" height="109.2" rx="6" fill="url(#nbody)" fill-opacity="0.85" stroke="#080808" stroke-width="1.7" filter="url(#nshadow)"/>
<path d="M697.0,637.9 V621.5 Q697.0,616.5 702.0,616.5 H892.1 Q897.1,616.5 897.1,621.5 V637.9 Z" fill="url(#hg_grey)"/>
<path d="M697.0,637.9 V621.5 Q697.0,616.5 702.0,616.5 H892.1 Q897.1,616.5 897.1,621.5 V637.9 Z" fill="url(#hgv)"/>
<path d="M697.5,622.5 Q697.5,617.3 703.0,617.3 H891.1 Q896.6,617.3 896.6,622.5" fill="none" stroke="#ffffff" stroke-opacity="0.35" stroke-width="1.2"/>
<text x="709.0" y="632.3" font-size="14.97" font-weight="700" fill="#d6d6d6" textLength="95.8" lengthAdjust="spacingAndGlyphs">Spline Sampler</text>
<rect x="720.9" y="655.5" width="3.6" height="13" rx="1.5" fill="#2ccde0" fill-opacity="0.7"/>
<rect x="717.1" y="650.5" width="4" height="17" rx="2" fill="#2ccde0" fill-opacity="0.85"/>
<rect x="712.9" y="647.0" width="5" height="20" rx="2.5" fill="#2ccde0"/>
<circle cx="711.1" cy="651.5" r="3.8" fill="#2ccde0" stroke="#000" stroke-opacity="0.45" stroke-width="0.8"/>
<circle cx="711.1" cy="656.5" r="3.8" fill="#2ccde0" stroke="#000" stroke-opacity="0.45" stroke-width="0.8"/>
<circle cx="711.1" cy="661.8" r="3.8" fill="#2ccde0" stroke="#000" stroke-opacity="0.45" stroke-width="0.8"/>
<text x="732.0" y="661.4" font-size="12.79" fill="#e6e6e6" textLength="33.0" lengthAdjust="spacingAndGlyphs">Spline</text>
<text x="842.7" y="661.4" font-size="12.79" fill="#e6e6e6" textLength="19.3" lengthAdjust="spacingAndGlyphs">Out</text>
<rect x="872.5" y="647.0" width="8" height="20" rx="4" fill="#3d8af7"/>
<circle cx="879.1" cy="651.0" r="3.7" fill="#3d8af7" stroke="#000" stroke-opacity="0.45" stroke-width="0.8"/>
<circle cx="879.1" cy="657.0" r="3.7" fill="#3d8af7" stroke="#000" stroke-opacity="0.45" stroke-width="0.8"/>
<circle cx="879.1" cy="663.0" r="3.7" fill="#3d8af7" stroke="#000" stroke-opacity="0.45" stroke-width="0.8"/>
<rect x="708.5" y="677.5" width="13" height="19.5" rx="4" fill="#8a8a8a" stroke="#f2f2f2" stroke-width="1.5"/><circle cx="720" cy="687" r="6" fill="#1a1a1a" stroke="#f2f2f2" stroke-width="1.5"/>
<text x="732.0" y="691.4" font-size="12.79" fill="#e6e6e6" textLength="90.0" lengthAdjust="spacingAndGlyphs">Bounding Shape</text>
<path d="M792.5,709.4 L798.0,714.9 L803.5,709.4" fill="none" stroke="#f4f4f4" stroke-width="2.2"/>
<rect x="79.3" y="954.5" width="163.3" height="78.8" rx="6" fill="url(#nbody)" fill-opacity="0.85" stroke="#080808" stroke-width="1.7" filter="url(#nshadow)"/>
<path d="M80.8,979.0 V961.0 Q80.8,956.0 85.8,956.0 H236.1 Q241.1,956.0 241.1,961.0 V979.0 Z" fill="url(#hg_blue)"/>
<path d="M80.8,979.0 V961.0 Q80.8,956.0 85.8,956.0 H236.1 Q241.1,956.0 241.1,961.0 V979.0 Z" fill="url(#hgv)"/>
<path d="M81.3,962.0 Q81.3,956.8 86.8,956.8 H235.1 Q240.6,956.8 240.6,962.0" fill="none" stroke="#ffffff" stroke-opacity="0.35" stroke-width="1.2"/>
<text x="94.2" y="973.0" font-size="14.97" font-weight="700" fill="#d6d6d6" textLength="113.1" lengthAdjust="spacingAndGlyphs">Create Points Grid</text>
<text x="187.3" y="1001.2" font-size="12.79" fill="#e6e6e6" textLength="18.4" lengthAdjust="spacingAndGlyphs">Out</text>
<rect x="216.5" y="986.8" width="8" height="20" rx="4" fill="#3d8af7"/>
<circle cx="223.1" cy="990.8" r="3.7" fill="#3d8af7" stroke="#000" stroke-opacity="0.45" stroke-width="0.8"/>
<circle cx="223.1" cy="996.8" r="3.7" fill="#3d8af7" stroke="#000" stroke-opacity="0.45" stroke-width="0.8"/>
<circle cx="223.1" cy="1002.8" r="3.7" fill="#3d8af7" stroke="#000" stroke-opacity="0.45" stroke-width="0.8"/>
<path d="M156.2,1020.0 L161.7,1025.5 L167.2,1020.0" fill="none" stroke="#f4f4f4" stroke-width="2.2"/>
<rect x="274.5" y="954.5" width="152.3" height="78.8" rx="6" fill="url(#nbody)" fill-opacity="0.85" stroke="#080808" stroke-width="1.7" filter="url(#nshadow)"/>
<path d="M276.0,979.0 V961.0 Q276.0,956.0 281.0,956.0 H420.3 Q425.3,956.0 425.3,961.0 V979.0 Z" fill="url(#hg_mag)"/>
<path d="M276.0,979.0 V961.0 Q276.0,956.0 281.0,956.0 H420.3 Q425.3,956.0 425.3,961.0 V979.0 Z" fill="url(#hgv)"/>
<path d="M276.5,962.0 Q276.5,956.8 282.0,956.8 H419.3 Q424.8,956.8 424.8,962.0" fill="none" stroke="#ffffff" stroke-opacity="0.35" stroke-width="1.2"/>
<text x="288.0" y="973.0" font-size="14.97" font-weight="700" fill="#d6d6d6" textLength="103.8" lengthAdjust="spacingAndGlyphs">Bounds Modifier</text>
<rect x="299.9" y="995.3" width="3.6" height="13" rx="1.5" fill="#3d8af7" fill-opacity="0.7"/>
<rect x="296.1" y="990.3" width="4" height="17" rx="2" fill="#3d8af7" fill-opacity="0.85"/>
<rect x="291.9" y="986.8" width="5" height="20" rx="2.5" fill="#3d8af7"/>
<circle cx="290.1" cy="991.3" r="3.8" fill="#3d8af7" stroke="#000" stroke-opacity="0.45" stroke-width="0.8"/>
<circle cx="290.1" cy="996.3" r="3.8" fill="#3d8af7" stroke="#000" stroke-opacity="0.45" stroke-width="0.8"/>
<circle cx="290.1" cy="1001.6" r="3.8" fill="#3d8af7" stroke="#000" stroke-opacity="0.45" stroke-width="0.8"/>
<text x="311.0" y="1001.2" font-size="12.79" fill="#e6e6e6" textLength="9.0" lengthAdjust="spacingAndGlyphs">In</text>
<text x="371.0" y="1001.2" font-size="12.79" fill="#e6e6e6" textLength="18.8" lengthAdjust="spacingAndGlyphs">Out</text>
<rect x="400.6" y="986.8" width="8" height="20" rx="4" fill="#3d8af7"/>
<circle cx="407.2" cy="990.8" r="3.7" fill="#3d8af7" stroke="#000" stroke-opacity="0.45" stroke-width="0.8"/>
<circle cx="407.2" cy="996.8" r="3.7" fill="#3d8af7" stroke="#000" stroke-opacity="0.45" stroke-width="0.8"/>
<circle cx="407.2" cy="1002.8" r="3.7" fill="#3d8af7" stroke="#000" stroke-opacity="0.45" stroke-width="0.8"/>
<path d="M345.5,1020.0 L351.0,1025.5 L356.5,1020.0" fill="none" stroke="#f4f4f4" stroke-width="2.2"/>
<rect x="711.7" y="874.6" width="149.9" height="108.4" rx="6" fill="url(#nbody)" fill-opacity="0.85" stroke="#080808" stroke-width="1.7" filter="url(#nshadow)"/>
<path d="M713.2,897.7 V881.1 Q713.2,876.1 718.2,876.1 H855.1 Q860.1,876.1 860.1,881.1 V897.7 Z" fill="url(#hg_grey)"/>
<path d="M713.2,897.7 V881.1 Q713.2,876.1 718.2,876.1 H855.1 Q860.1,876.1 860.1,881.1 V897.7 Z" fill="url(#hgv)"/>
<path d="M713.7,882.1 Q713.7,876.9 719.2,876.9 H854.1 Q859.6,876.9 859.6,882.1" fill="none" stroke="#ffffff" stroke-opacity="0.35" stroke-width="1.2"/>
<text x="725.0" y="891.7" font-size="14.97" font-weight="700" fill="#d6d6d6" textLength="76.0" lengthAdjust="spacingAndGlyphs">Copy Points</text>
<rect x="727.0" y="906.0" width="8" height="20" rx="4" fill="#3d8af7"/>
<circle cx="733.6" cy="910.0" r="3.7" fill="#3d8af7" stroke="#000" stroke-opacity="0.45" stroke-width="0.8"/>
<circle cx="733.6" cy="916.0" r="3.7" fill="#3d8af7" stroke="#000" stroke-opacity="0.45" stroke-width="0.8"/>
<circle cx="733.6" cy="922.0" r="3.7" fill="#3d8af7" stroke="#000" stroke-opacity="0.45" stroke-width="0.8"/>
<text x="749.0" y="920.4" font-size="12.79" fill="#e6e6e6" textLength="37.0" lengthAdjust="spacingAndGlyphs">Source</text>
<text x="806.0" y="920.4" font-size="12.79" fill="#e6e6e6" textLength="19.0" lengthAdjust="spacingAndGlyphs">Out</text>
<rect x="836.0" y="906.0" width="8" height="20" rx="4" fill="#3d8af7"/>
<circle cx="842.6" cy="910.0" r="3.7" fill="#3d8af7" stroke="#000" stroke-opacity="0.45" stroke-width="0.8"/>
<circle cx="842.6" cy="916.0" r="3.7" fill="#3d8af7" stroke="#000" stroke-opacity="0.45" stroke-width="0.8"/>
<circle cx="842.6" cy="922.0" r="3.7" fill="#3d8af7" stroke="#000" stroke-opacity="0.45" stroke-width="0.8"/>
<rect x="727.0" y="936.0" width="8" height="20" rx="4" fill="#3d8af7"/>
<circle cx="733.6" cy="940.0" r="3.7" fill="#3d8af7" stroke="#000" stroke-opacity="0.45" stroke-width="0.8"/>
<circle cx="733.6" cy="946.0" r="3.7" fill="#3d8af7" stroke="#000" stroke-opacity="0.45" stroke-width="0.8"/>
<circle cx="733.6" cy="952.0" r="3.7" fill="#3d8af7" stroke="#000" stroke-opacity="0.45" stroke-width="0.8"/>
<text x="749.0" y="950.4" font-size="12.79" fill="#e6e6e6" textLength="35.0" lengthAdjust="spacingAndGlyphs">Target</text>
<path d="M782.2,969.0 L787.7,974.5 L793.2,969.0" fill="none" stroke="#f4f4f4" stroke-width="2.2"/>
<rect x="954.5" y="761.8" width="149.5" height="107.5" rx="6" fill="url(#nbody)" fill-opacity="0.85" stroke="#080808" stroke-width="1.7" filter="url(#nshadow)"/>
<path d="M956.0,783.8 V768.3 Q956.0,763.3 961.0,763.3 H1097.5 Q1102.5,763.3 1102.5,768.3 V783.8 Z" fill="url(#hg_mag)"/>
<path d="M956.0,783.8 V768.3 Q956.0,763.3 961.0,763.3 H1097.5 Q1102.5,763.3 1102.5,768.3 V783.8 Z" fill="url(#hgv)"/>
<path d="M956.5,769.3 Q956.5,764.1 962.0,764.1 H1096.5 Q1102.0,764.1 1102.0,769.3" fill="none" stroke="#ffffff" stroke-opacity="0.35" stroke-width="1.2"/>
<text x="968.0" y="777.8" font-size="14.97" font-weight="700" fill="#d6d6d6" textLength="55.0" lengthAdjust="spacingAndGlyphs">Distance</text>
<rect x="980.1" y="801.0" width="3.6" height="13" rx="1.5" fill="#3d8af7" fill-opacity="0.7"/>
<rect x="976.3" y="796.0" width="4" height="17" rx="2" fill="#3d8af7" fill-opacity="0.85"/>
<rect x="972.1" y="792.5" width="5" height="20" rx="2.5" fill="#3d8af7"/>
<circle cx="970.3" cy="797.0" r="3.8" fill="#3d8af7" stroke="#000" stroke-opacity="0.45" stroke-width="0.8"/>
<circle cx="970.3" cy="802.0" r="3.8" fill="#3d8af7" stroke="#000" stroke-opacity="0.45" stroke-width="0.8"/>
<circle cx="970.3" cy="807.3" r="3.8" fill="#3d8af7" stroke="#000" stroke-opacity="0.45" stroke-width="0.8"/>
<text x="992.0" y="806.9" font-size="12.79" fill="#e6e6e6" textLength="37.0" lengthAdjust="spacingAndGlyphs">Source</text>
<text x="1049.0" y="806.9" font-size="12.79" fill="#e6e6e6" textLength="18.6" lengthAdjust="spacingAndGlyphs">Out</text>
<rect x="1078.7" y="792.5" width="8" height="20" rx="4" fill="#3d8af7"/>
<circle cx="1085.3" cy="796.5" r="3.7" fill="#3d8af7" stroke="#000" stroke-opacity="0.45" stroke-width="0.8"/>
<circle cx="1085.3" cy="802.5" r="3.7" fill="#3d8af7" stroke="#000" stroke-opacity="0.45" stroke-width="0.8"/>
<circle cx="1085.3" cy="808.5" r="3.7" fill="#3d8af7" stroke="#000" stroke-opacity="0.45" stroke-width="0.8"/>
<rect x="980.1" y="831.5" width="3.6" height="13" rx="1.5" fill="#3d8af7" fill-opacity="0.7"/>
<rect x="976.3" y="826.5" width="4" height="17" rx="2" fill="#3d8af7" fill-opacity="0.85"/>
<rect x="972.1" y="823.0" width="5" height="20" rx="2.5" fill="#3d8af7"/>
<circle cx="970.3" cy="827.5" r="3.8" fill="#3d8af7" stroke="#000" stroke-opacity="0.45" stroke-width="0.8"/>
<circle cx="970.3" cy="832.5" r="3.8" fill="#3d8af7" stroke="#000" stroke-opacity="0.45" stroke-width="0.8"/>
<circle cx="970.3" cy="837.8" r="3.8" fill="#3d8af7" stroke="#000" stroke-opacity="0.45" stroke-width="0.8"/>
<text x="992.0" y="837.4" font-size="12.79" fill="#e6e6e6" textLength="35.0" lengthAdjust="spacingAndGlyphs">Target</text>
<path d="M1025.0,856.0 L1030.5,861.5 L1036.0,856.0" fill="none" stroke="#f4f4f4" stroke-width="2.2"/>
<rect x="1068.6" y="955.6" width="130.4" height="77.0" rx="6" fill="url(#nbody)" fill-opacity="0.85" stroke="#080808" stroke-width="1.7" filter="url(#nshadow)"/>
<path d="M1070.1,978.7 V962.1 Q1070.1,957.1 1075.1,957.1 H1192.5 Q1197.5,957.1 1197.5,962.1 V978.7 Z" fill="url(#hg_ind)"/>
<path d="M1070.1,978.7 V962.1 Q1070.1,957.1 1075.1,957.1 H1192.5 Q1197.5,957.1 1197.5,962.1 V978.7 Z" fill="url(#hgv)"/>
<path d="M1070.6,963.1 Q1070.6,957.9 1076.1,957.9 H1191.5 Q1197.0,957.9 1197.0,963.1" fill="none" stroke="#ffffff" stroke-opacity="0.35" stroke-width="1.2"/>
<text x="1082.0" y="972.7" font-size="14.97" font-weight="700" fill="#d6d6d6" textLength="83.0" lengthAdjust="spacingAndGlyphs">Density Filter</text>
<rect x="1094.0" y="995.2" width="3.6" height="13" rx="1.5" fill="#3d8af7" fill-opacity="0.7"/>
<rect x="1090.2" y="990.2" width="4" height="17" rx="2" fill="#3d8af7" fill-opacity="0.85"/>
<rect x="1086.0" y="986.7" width="5" height="20" rx="2.5" fill="#3d8af7"/>
<circle cx="1084.2" cy="991.2" r="3.8" fill="#3d8af7" stroke="#000" stroke-opacity="0.45" stroke-width="0.8"/>
<circle cx="1084.2" cy="996.2" r="3.8" fill="#3d8af7" stroke="#000" stroke-opacity="0.45" stroke-width="0.8"/>
<circle cx="1084.2" cy="1001.5" r="3.8" fill="#3d8af7" stroke="#000" stroke-opacity="0.45" stroke-width="0.8"/>
<text x="1105.0" y="1001.1" font-size="12.79" fill="#e6e6e6" textLength="9.7" lengthAdjust="spacingAndGlyphs">In</text>
<text x="1144.0" y="1001.1" font-size="12.79" fill="#e6e6e6" textLength="19.0" lengthAdjust="spacingAndGlyphs">Out</text>
<rect x="1173.6" y="986.7" width="8" height="20" rx="4" fill="#3d8af7"/>
<circle cx="1180.2" cy="990.7" r="3.7" fill="#3d8af7" stroke="#000" stroke-opacity="0.45" stroke-width="0.8"/>
<circle cx="1180.2" cy="996.7" r="3.7" fill="#3d8af7" stroke="#000" stroke-opacity="0.45" stroke-width="0.8"/>
<circle cx="1180.2" cy="1002.7" r="3.7" fill="#3d8af7" stroke="#000" stroke-opacity="0.45" stroke-width="0.8"/>
<path d="M1129.1,1019.0 L1134.6,1024.5 L1140.1,1019.0" fill="none" stroke="#f4f4f4" stroke-width="2.2"/>
<rect x="1456.8" y="744.9" width="106.6" height="78.3" rx="6" fill="url(#nbody)" fill-opacity="0.85" stroke="#080808" stroke-width="1.7" filter="url(#nshadow)"/>
<path d="M1458.3,767.9 V751.4 Q1458.3,746.4 1463.3,746.4 H1556.9 Q1561.9,746.4 1561.9,751.4 V767.9 Z" fill="url(#hg_red)"/>
<path d="M1458.3,767.9 V751.4 Q1458.3,746.4 1463.3,746.4 H1556.9 Q1561.9,746.4 1561.9,751.4 V767.9 Z" fill="url(#hgv)"/>
<path d="M1458.8,752.4 Q1458.8,747.2 1464.3,747.2 H1555.9 Q1561.4,747.2 1561.4,752.4" fill="none" stroke="#ffffff" stroke-opacity="0.35" stroke-width="1.2"/>
<text x="1471.4" y="761.7" font-size="14.97" font-weight="700" fill="#d6d6d6" textLength="32.0" lengthAdjust="spacingAndGlyphs">Input</text>
<text x="1466.3" y="790.3" font-size="12.79" fill="#e6e6e6" textLength="59.7" lengthAdjust="spacingAndGlyphs">Landscape</text>
<circle cx="1542.9" cy="785.9" r="5.4" fill="#3cc47c"/><path d="M1549.5,782 L1553.5,785.9 L1549.5,789.8 Z" fill="#3cc47c"/>
<path d="M1505.3,809.6 L1510.8,815.1 L1516.3,809.6" fill="none" stroke="#f4f4f4" stroke-width="2.2"/>
<rect x="1473.4" y="582.5" width="173.6" height="109.0" rx="6" fill="url(#nbody)" fill-opacity="0.85" stroke="#080808" stroke-width="1.7" filter="url(#nshadow)"/>
<path d="M1474.9,606.0 V589.0 Q1474.9,584.0 1479.9,584.0 H1640.5 Q1645.5,584.0 1645.5,589.0 V606.0 Z" fill="url(#hg_mag)"/>
<path d="M1474.9,606.0 V589.0 Q1474.9,584.0 1479.9,584.0 H1640.5 Q1645.5,584.0 1645.5,589.0 V606.0 Z" fill="url(#hgv)"/>
<path d="M1475.4,590.0 Q1475.4,584.8 1480.9,584.8 H1639.5 Q1645.0,584.8 1645.0,590.0" fill="none" stroke="#ffffff" stroke-opacity="0.35" stroke-width="1.2"/>
<text x="1487.4" y="599.8" font-size="14.97" font-weight="700" fill="#d6d6d6" textLength="63.5" lengthAdjust="spacingAndGlyphs">Difference</text>
<rect x="1487.1" y="614.1" width="13" height="19.5" rx="4" fill="#8a8a8a" stroke="#f2f2f2" stroke-width="1.5"/>
<circle cx="1497.6" cy="623.9" r="5.6" fill="#ffffff"/>
<text x="1510.7" y="628.3" font-size="12.79" fill="#e6e6e6" textLength="36.7" lengthAdjust="spacingAndGlyphs">Source</text>
<text x="1590.4" y="628.3" font-size="12.79" fill="#e6e6e6" textLength="18.5" lengthAdjust="spacingAndGlyphs">Out</text>
<rect x="1620.2" y="614.1" width="13" height="19.5" rx="4" fill="#8a8a8a" stroke="#f2f2f2" stroke-width="1.5"/>
<circle cx="1622.4" cy="623.9" r="5.6" fill="#ffffff"/>
<rect x="1487.1" y="645.1" width="13" height="19.5" rx="4" fill="#8a8a8a" stroke="#f2f2f2" stroke-width="1.5"/>
<circle cx="1497.6" cy="654.9" r="5.6" fill="#ffffff"/>
<text x="1510.7" y="659.3" font-size="12.79" fill="#e6e6e6" textLength="60.0" lengthAdjust="spacingAndGlyphs">Differences</text>
<path d="M1555.3,677.3 L1560.8,682.8 L1566.3,677.3" fill="none" stroke="#f4f4f4" stroke-width="2.2"/>
<rect x="1959.2" y="582.5" width="206.0" height="109.0" rx="6" fill="url(#nbody)" fill-opacity="0.85" stroke="#080808" stroke-width="1.7" filter="url(#nshadow)"/>
<path d="M1960.7,606.0 V589.0 Q1960.7,584.0 1965.7,584.0 H2158.7 Q2163.7,584.0 2163.7,589.0 V606.0 Z" fill="url(#hg_mag)"/>
<path d="M1960.7,606.0 V589.0 Q1960.7,584.0 1965.7,584.0 H2158.7 Q2163.7,584.0 2163.7,589.0 V606.0 Z" fill="url(#hgv)"/>
<path d="M1961.2,590.0 Q1961.2,584.8 1966.7,584.8 H2157.7 Q2163.2,584.8 2163.2,590.0" fill="none" stroke="#ffffff" stroke-opacity="0.35" stroke-width="1.2"/>
<text x="1973.2" y="599.8" font-size="14.97" font-weight="700" fill="#d6d6d6" textLength="64.4" lengthAdjust="spacingAndGlyphs">Projection</text>
<rect x="1984.8" y="622.4" width="3.6" height="13" rx="1.5" fill="#a898f0" fill-opacity="0.7"/>
<rect x="1981.0" y="617.4" width="4" height="17" rx="2" fill="#a898f0" fill-opacity="0.85"/>
<rect x="1976.8" y="613.9" width="5" height="20" rx="2.5" fill="#a898f0"/>
<circle cx="1975.0" cy="618.4" r="3.8" fill="#a898f0" stroke="#000" stroke-opacity="0.45" stroke-width="0.8"/>
<circle cx="1975.0" cy="623.4" r="3.8" fill="#a898f0" stroke="#000" stroke-opacity="0.45" stroke-width="0.8"/>
<circle cx="1975.0" cy="628.7" r="3.8" fill="#a898f0" stroke="#000" stroke-opacity="0.45" stroke-width="0.8"/>
<text x="1996.0" y="628.3" font-size="12.79" fill="#e6e6e6" textLength="9.7" lengthAdjust="spacingAndGlyphs">In</text>
<text x="2108.5" y="628.3" font-size="12.79" fill="#e6e6e6" textLength="19.2" lengthAdjust="spacingAndGlyphs">Out</text>
<rect x="2138.4" y="614.1" width="13" height="19.5" rx="4" fill="#8a8a8a" stroke="#f2f2f2" stroke-width="1.5"/>
<circle cx="2140.6" cy="623.9" r="5.6" fill="#ffffff"/>
<circle cx="1979.9" cy="654.9" r="5.4" fill="#a898f0"/>
<text x="1996.0" y="659.3" font-size="12.79" fill="#e6e6e6" textLength="92.6" lengthAdjust="spacingAndGlyphs">Projection Target</text>
<path d="M2057.0,677.3 L2062.5,682.8 L2068.0,677.3" fill="none" stroke="#f4f4f4" stroke-width="2.2"/>
<rect x="2428.7" y="582.8" width="158.3" height="78.5" rx="6" fill="url(#nbody)" fill-opacity="0.85" stroke="#080808" stroke-width="1.7" filter="url(#nshadow)"/>
<path d="M2430.2,606.2 V589.3 Q2430.2,584.3 2435.2,584.3 H2580.5 Q2585.5,584.3 2585.5,589.3 V606.2 Z" fill="url(#hg_mag)"/>
<path d="M2430.2,606.2 V589.3 Q2430.2,584.3 2435.2,584.3 H2580.5 Q2585.5,584.3 2585.5,589.3 V606.2 Z" fill="url(#hgv)"/>
<path d="M2430.7,590.3 Q2430.7,585.1 2436.2,585.1 H2579.5 Q2585.0,585.1 2585.0,590.3" fill="none" stroke="#ffffff" stroke-opacity="0.35" stroke-width="1.2"/>
<text x="2442.7" y="600.1" font-size="14.97" font-weight="700" fill="#d6d6d6" textLength="110.0" lengthAdjust="spacingAndGlyphs">Transform Points</text>
<rect x="2454.1" y="622.5" width="3.6" height="13" rx="1.5" fill="#3d8af7" fill-opacity="0.7"/>
<rect x="2450.3" y="617.5" width="4" height="17" rx="2" fill="#3d8af7" fill-opacity="0.85"/>
<rect x="2446.1" y="614.0" width="5" height="20" rx="2.5" fill="#3d8af7"/>
<circle cx="2444.3" cy="618.5" r="3.8" fill="#3d8af7" stroke="#000" stroke-opacity="0.45" stroke-width="0.8"/>
<circle cx="2444.3" cy="623.5" r="3.8" fill="#3d8af7" stroke="#000" stroke-opacity="0.45" stroke-width="0.8"/>
<circle cx="2444.3" cy="628.8" r="3.8" fill="#3d8af7" stroke="#000" stroke-opacity="0.45" stroke-width="0.8"/>
<text x="2465.7" y="628.4" font-size="12.79" fill="#e6e6e6" textLength="9.7" lengthAdjust="spacingAndGlyphs">In</text>
<rect x="2561.6" y="614.0" width="8" height="20" rx="4" fill="#3d8af7"/>
<circle cx="2568.2" cy="618.0" r="3.7" fill="#3d8af7" stroke="#000" stroke-opacity="0.45" stroke-width="0.8"/>
<circle cx="2568.2" cy="624.0" r="3.7" fill="#3d8af7" stroke="#000" stroke-opacity="0.45" stroke-width="0.8"/>
<circle cx="2568.2" cy="630.0" r="3.7" fill="#3d8af7" stroke="#000" stroke-opacity="0.45" stroke-width="0.8"/>
<text x="2531.6" y="628.4" font-size="12.79" fill="#e6e6e6" textLength="18.6" lengthAdjust="spacingAndGlyphs">Out</text>
<path d="M2502.8,647.1 L2508.3,652.6 L2513.8,647.1" fill="none" stroke="#f4f4f4" stroke-width="2.2"/>
<rect x="2817.6" y="598.8" width="182.0" height="78.5" rx="6" fill="url(#nbody)" fill-opacity="0.85" stroke="#080808" stroke-width="1.7" filter="url(#nshadow)"/>
<path d="M2819.1,622.2 V605.3 Q2819.1,600.3 2824.1,600.3 H2993.1 Q2998.1,600.3 2998.1,605.3 V622.2 Z" fill="url(#hg_teal)"/>
<path d="M2819.1,622.2 V605.3 Q2819.1,600.3 2824.1,600.3 H2993.1 Q2998.1,600.3 2998.1,605.3 V622.2 Z" fill="url(#hgv)"/>
<path d="M2819.6,606.3 Q2819.6,601.1 2825.1,601.1 H2992.1 Q2997.6,601.1 2997.6,606.3" fill="none" stroke="#ffffff" stroke-opacity="0.35" stroke-width="1.2"/>
<text x="2831.6" y="616.1" font-size="14.97" font-weight="700" fill="#d6d6d6" textLength="132.5" lengthAdjust="spacingAndGlyphs">Static Mesh Spawner</text>
<rect x="2843.0" y="638.5" width="3.6" height="13" rx="1.5" fill="#3d8af7" fill-opacity="0.7"/>
<rect x="2839.2" y="633.5" width="4" height="17" rx="2" fill="#3d8af7" fill-opacity="0.85"/>
<rect x="2835.0" y="630.0" width="5" height="20" rx="2.5" fill="#3d8af7"/>
<circle cx="2833.2" cy="634.5" r="3.8" fill="#3d8af7" stroke="#000" stroke-opacity="0.45" stroke-width="0.8"/>
<circle cx="2833.2" cy="639.5" r="3.8" fill="#3d8af7" stroke="#000" stroke-opacity="0.45" stroke-width="0.8"/>
<circle cx="2833.2" cy="644.8" r="3.8" fill="#3d8af7" stroke="#000" stroke-opacity="0.45" stroke-width="0.8"/>
<text x="2854.6" y="644.4" font-size="12.79" fill="#e6e6e6" textLength="9.7" lengthAdjust="spacingAndGlyphs">In</text>
<rect x="2974.2" y="630.0" width="8" height="20" rx="4" fill="#3d8af7"/>
<circle cx="2980.8" cy="634.0" r="3.4" fill="#050a14" stroke="#3d8af7" stroke-width="1.4"/>
<circle cx="2980.8" cy="640.0" r="3.4" fill="#050a14" stroke="#3d8af7" stroke-width="1.4"/>
<circle cx="2980.8" cy="646.0" r="3.4" fill="#050a14" stroke="#3d8af7" stroke-width="1.4"/>
<text x="2944.2" y="644.4" font-size="12.79" fill="#e6e6e6" textLength="18.6" lengthAdjust="spacingAndGlyphs">Out</text>
<path d="M2903.6,663.1 L2909.1,668.6 L2914.6,663.1" fill="none" stroke="#f4f4f4" stroke-width="2.2"/>
<rect x="1748.2" y="598.5" width="143.4" height="35.5" rx="17.5" fill="url(#tpbody)" fill-opacity="0.62" stroke="#080808" stroke-width="2" filter="url(#nshadow)"/>
<path d="M1751.2,610.5 Q1754.2,601.0 1765.2,600.7 H1874.6 Q1885.6,601.0 1888.6,610.5" fill="none" stroke="#ffffff" stroke-opacity="0.4" stroke-width="1.2"/>
<rect x="1761.8" y="606.5" width="13" height="19.5" rx="4" fill="#8a8a8a" stroke="#f2f2f2" stroke-width="1.5"/>
<circle cx="1772.3" cy="616.3" r="5.6" fill="#ffffff"/>
<text x="1794.2" y="621.3" font-size="15.26" font-weight="700" fill="#f4f4f4" textLength="52.8" lengthAdjust="spacingAndGlyphs">To Point</text>
<rect x="1866.0" y="606.3" width="8" height="20" rx="4" fill="#3d8af7"/>
<circle cx="1872.6" cy="610.3" r="3.7" fill="#3d8af7" stroke="#000" stroke-opacity="0.45" stroke-width="0.8"/>
<circle cx="1872.6" cy="616.3" r="3.7" fill="#3d8af7" stroke="#000" stroke-opacity="0.45" stroke-width="0.8"/>
<circle cx="1872.6" cy="622.3" r="3.7" fill="#3d8af7" stroke="#000" stroke-opacity="0.45" stroke-width="0.8"/>
<rect x="2234.4" y="614.5" width="143.4" height="35.5" rx="17.5" fill="url(#tpbody)" fill-opacity="0.62" stroke="#080808" stroke-width="2" filter="url(#nshadow)"/>
<path d="M2237.4,626.5 Q2240.4,617.0 2251.4,616.7 H2360.8 Q2371.8,617.0 2374.8,626.5" fill="none" stroke="#ffffff" stroke-opacity="0.4" stroke-width="1.2"/>
<rect x="2248.0" y="622.5" width="13" height="19.5" rx="4" fill="#8a8a8a" stroke="#f2f2f2" stroke-width="1.5"/>
<circle cx="2258.5" cy="632.3" r="5.6" fill="#ffffff"/>
<text x="2280.4" y="637.3" font-size="15.26" font-weight="700" fill="#f4f4f4" textLength="52.8" lengthAdjust="spacingAndGlyphs">To Point</text>
<rect x="2352.2" y="622.3" width="8" height="20" rx="4" fill="#3d8af7"/>
<circle cx="2358.8" cy="626.3" r="3.7" fill="#3d8af7" stroke="#000" stroke-opacity="0.45" stroke-width="0.8"/>
<circle cx="2358.8" cy="632.3" r="3.7" fill="#3d8af7" stroke="#000" stroke-opacity="0.45" stroke-width="0.8"/>
<circle cx="2358.8" cy="638.3" r="3.7" fill="#3d8af7" stroke="#000" stroke-opacity="0.45" stroke-width="0.8"/>
<rect x="2623.3" y="614.5" width="143.4" height="35.5" rx="17.5" fill="url(#tpbody)" fill-opacity="0.62" stroke="#080808" stroke-width="2" filter="url(#nshadow)"/>
<path d="M2626.3,626.5 Q2629.3,617.0 2640.3,616.7 H2749.7 Q2760.7,617.0 2763.7,626.5" fill="none" stroke="#ffffff" stroke-opacity="0.4" stroke-width="1.2"/>
<rect x="2636.9" y="622.5" width="13" height="19.5" rx="4" fill="#8a8a8a" stroke="#f2f2f2" stroke-width="1.5"/>
<circle cx="2647.4" cy="632.3" r="5.6" fill="#ffffff"/>
<text x="2669.3" y="637.3" font-size="15.26" font-weight="700" fill="#f4f4f4" textLength="52.8" lengthAdjust="spacingAndGlyphs">To Point</text>
<rect x="2741.1" y="622.3" width="8" height="20" rx="4" fill="#3d8af7"/>
<circle cx="2747.7" cy="626.3" r="3.7" fill="#3d8af7" stroke="#000" stroke-opacity="0.45" stroke-width="0.8"/>
<circle cx="2747.7" cy="632.3" r="3.7" fill="#3d8af7" stroke="#000" stroke-opacity="0.45" stroke-width="0.8"/>
<circle cx="2747.7" cy="638.3" r="3.7" fill="#3d8af7" stroke="#000" stroke-opacity="0.45" stroke-width="0.8"/>
<rect x="1473.4" y="987.6" width="158.3" height="78.5" rx="6" fill="url(#nbody)" fill-opacity="0.85" stroke="#080808" stroke-width="1.7" filter="url(#nshadow)"/>
<path d="M1474.9,1011.0 V994.1 Q1474.9,989.1 1479.9,989.1 H1625.2 Q1630.2,989.1 1630.2,994.1 V1011.0 Z" fill="url(#hg_mag)"/>
<path d="M1474.9,1011.0 V994.1 Q1474.9,989.1 1479.9,989.1 H1625.2 Q1630.2,989.1 1630.2,994.1 V1011.0 Z" fill="url(#hgv)"/>
<path d="M1475.4,995.1 Q1475.4,989.9 1480.9,989.9 H1624.2 Q1629.7,989.9 1629.7,995.1" fill="none" stroke="#ffffff" stroke-opacity="0.35" stroke-width="1.2"/>
<text x="1487.4" y="1004.9" font-size="14.97" font-weight="700" fill="#d6d6d6" textLength="110.0" lengthAdjust="spacingAndGlyphs">Transform Points</text>
<rect x="1498.8" y="1027.3" width="3.6" height="13" rx="1.5" fill="#3d8af7" fill-opacity="0.7"/>
<rect x="1495.0" y="1022.3" width="4" height="17" rx="2" fill="#3d8af7" fill-opacity="0.85"/>
<rect x="1490.8" y="1018.8" width="5" height="20" rx="2.5" fill="#3d8af7"/>
<circle cx="1489.0" cy="1023.3" r="3.8" fill="#3d8af7" stroke="#000" stroke-opacity="0.45" stroke-width="0.8"/>
<circle cx="1489.0" cy="1028.3" r="3.8" fill="#3d8af7" stroke="#000" stroke-opacity="0.45" stroke-width="0.8"/>
<circle cx="1489.0" cy="1033.6" r="3.8" fill="#3d8af7" stroke="#000" stroke-opacity="0.45" stroke-width="0.8"/>
<text x="1510.4" y="1033.2" font-size="12.79" fill="#e6e6e6" textLength="9.7" lengthAdjust="spacingAndGlyphs">In</text>
<rect x="1606.3" y="1018.8" width="8" height="20" rx="4" fill="#3d8af7"/>
<circle cx="1612.9" cy="1022.8" r="3.7" fill="#3d8af7" stroke="#000" stroke-opacity="0.45" stroke-width="0.8"/>
<circle cx="1612.9" cy="1028.8" r="3.7" fill="#3d8af7" stroke="#000" stroke-opacity="0.45" stroke-width="0.8"/>
<circle cx="1612.9" cy="1034.8" r="3.7" fill="#3d8af7" stroke="#000" stroke-opacity="0.45" stroke-width="0.8"/>
<text x="1576.3" y="1033.2" font-size="12.79" fill="#e6e6e6" textLength="18.6" lengthAdjust="spacingAndGlyphs">Out</text>
<path d="M1547.6,1051.9 L1553.1,1057.4 L1558.6,1051.9" fill="none" stroke="#f4f4f4" stroke-width="2.2"/>
<rect x="1699.3" y="972.0" width="173.6" height="109.0" rx="6" fill="url(#nbody)" fill-opacity="0.85" stroke="#080808" stroke-width="1.7" filter="url(#nshadow)"/>
<path d="M1700.8,995.5 V978.5 Q1700.8,973.5 1705.8,973.5 H1866.4 Q1871.4,973.5 1871.4,978.5 V995.5 Z" fill="url(#hg_mag)"/>
<path d="M1700.8,995.5 V978.5 Q1700.8,973.5 1705.8,973.5 H1866.4 Q1871.4,973.5 1871.4,978.5 V995.5 Z" fill="url(#hgv)"/>
<path d="M1701.3,979.5 Q1701.3,974.3 1706.8,974.3 H1865.4 Q1870.9,974.3 1870.9,979.5" fill="none" stroke="#ffffff" stroke-opacity="0.35" stroke-width="1.2"/>
<text x="1713.3" y="989.3" font-size="14.97" font-weight="700" fill="#d6d6d6" textLength="63.5" lengthAdjust="spacingAndGlyphs">Difference</text>
<rect x="1713.0" y="1003.6" width="13" height="19.5" rx="4" fill="#8a8a8a" stroke="#f2f2f2" stroke-width="1.5"/>
<circle cx="1723.5" cy="1013.4" r="5.6" fill="#ffffff"/>
<text x="1736.6" y="1017.8" font-size="12.79" fill="#e6e6e6" textLength="36.7" lengthAdjust="spacingAndGlyphs">Source</text>
<text x="1816.3" y="1017.8" font-size="12.79" fill="#e6e6e6" textLength="18.5" lengthAdjust="spacingAndGlyphs">Out</text>
<rect x="1846.1" y="1003.6" width="13" height="19.5" rx="4" fill="#8a8a8a" stroke="#f2f2f2" stroke-width="1.5"/>
<circle cx="1848.3" cy="1013.4" r="5.6" fill="#ffffff"/>
<rect x="1713.0" y="1034.7" width="13" height="19.5" rx="4" fill="#8a8a8a" stroke="#f2f2f2" stroke-width="1.5"/>
<circle cx="1723.5" cy="1044.4" r="5.6" fill="#ffffff"/>
<text x="1736.6" y="1048.8" font-size="12.79" fill="#e6e6e6" textLength="60.0" lengthAdjust="spacingAndGlyphs">Differences</text>
<path d="M1781.2,1066.8 L1786.7,1072.3 L1792.2,1066.8" fill="none" stroke="#f4f4f4" stroke-width="2.2"/>
<rect x="2137.5" y="955.0" width="206.0" height="109.0" rx="6" fill="url(#nbody)" fill-opacity="0.85" stroke="#080808" stroke-width="1.7" filter="url(#nshadow)"/>
<path d="M2139.0,978.5 V961.5 Q2139.0,956.5 2144.0,956.5 H2337.0 Q2342.0,956.5 2342.0,961.5 V978.5 Z" fill="url(#hg_mag)"/>
<path d="M2139.0,978.5 V961.5 Q2139.0,956.5 2144.0,956.5 H2337.0 Q2342.0,956.5 2342.0,961.5 V978.5 Z" fill="url(#hgv)"/>
<path d="M2139.5,962.5 Q2139.5,957.3 2145.0,957.3 H2336.0 Q2341.5,957.3 2341.5,962.5" fill="none" stroke="#ffffff" stroke-opacity="0.35" stroke-width="1.2"/>
<text x="2151.5" y="972.3" font-size="14.97" font-weight="700" fill="#d6d6d6" textLength="64.4" lengthAdjust="spacingAndGlyphs">Projection</text>
<rect x="2163.1" y="994.9" width="3.6" height="13" rx="1.5" fill="#a898f0" fill-opacity="0.7"/>
<rect x="2159.3" y="989.9" width="4" height="17" rx="2" fill="#a898f0" fill-opacity="0.85"/>
<rect x="2155.1" y="986.4" width="5" height="20" rx="2.5" fill="#a898f0"/>
<circle cx="2153.3" cy="990.9" r="3.8" fill="#a898f0" stroke="#000" stroke-opacity="0.45" stroke-width="0.8"/>
<circle cx="2153.3" cy="995.9" r="3.8" fill="#a898f0" stroke="#000" stroke-opacity="0.45" stroke-width="0.8"/>
<circle cx="2153.3" cy="1001.2" r="3.8" fill="#a898f0" stroke="#000" stroke-opacity="0.45" stroke-width="0.8"/>
<text x="2174.3" y="1000.8" font-size="12.79" fill="#e6e6e6" textLength="9.7" lengthAdjust="spacingAndGlyphs">In</text>
<text x="2286.8" y="1000.8" font-size="12.79" fill="#e6e6e6" textLength="19.2" lengthAdjust="spacingAndGlyphs">Out</text>
<rect x="2316.8" y="986.6" width="13" height="19.5" rx="4" fill="#8a8a8a" stroke="#f2f2f2" stroke-width="1.5"/>
<circle cx="2318.9" cy="996.4" r="5.6" fill="#ffffff"/>
<circle cx="2158.2" cy="1027.4" r="5.4" fill="#a898f0"/>
<text x="2174.3" y="1031.8" font-size="12.79" fill="#e6e6e6" textLength="92.6" lengthAdjust="spacingAndGlyphs">Projection Target</text>
<path d="M2235.3,1049.8 L2240.8,1055.3 L2246.3,1049.8" fill="none" stroke="#f4f4f4" stroke-width="2.2"/>
<rect x="2623.3" y="971.8" width="158.3" height="78.5" rx="6" fill="url(#nbody)" fill-opacity="0.85" stroke="#080808" stroke-width="1.7" filter="url(#nshadow)"/>
<path d="M2624.8,995.2 V978.3 Q2624.8,973.3 2629.8,973.3 H2775.1 Q2780.1,973.3 2780.1,978.3 V995.2 Z" fill="url(#hg_mag)"/>
<path d="M2624.8,995.2 V978.3 Q2624.8,973.3 2629.8,973.3 H2775.1 Q2780.1,973.3 2780.1,978.3 V995.2 Z" fill="url(#hgv)"/>
<path d="M2625.3,979.3 Q2625.3,974.1 2630.8,974.1 H2774.1 Q2779.6,974.1 2779.6,979.3" fill="none" stroke="#ffffff" stroke-opacity="0.35" stroke-width="1.2"/>
<text x="2637.3" y="989.1" font-size="14.97" font-weight="700" fill="#d6d6d6" textLength="110.0" lengthAdjust="spacingAndGlyphs">Transform Points</text>
<rect x="2648.7" y="1011.5" width="3.6" height="13" rx="1.5" fill="#3d8af7" fill-opacity="0.7"/>
<rect x="2644.9" y="1006.5" width="4" height="17" rx="2" fill="#3d8af7" fill-opacity="0.85"/>
<rect x="2640.7" y="1003.0" width="5" height="20" rx="2.5" fill="#3d8af7"/>
<circle cx="2638.9" cy="1007.5" r="3.8" fill="#3d8af7" stroke="#000" stroke-opacity="0.45" stroke-width="0.8"/>
<circle cx="2638.9" cy="1012.5" r="3.8" fill="#3d8af7" stroke="#000" stroke-opacity="0.45" stroke-width="0.8"/>
<circle cx="2638.9" cy="1017.8" r="3.8" fill="#3d8af7" stroke="#000" stroke-opacity="0.45" stroke-width="0.8"/>
<text x="2660.3" y="1017.4" font-size="12.79" fill="#e6e6e6" textLength="9.7" lengthAdjust="spacingAndGlyphs">In</text>
<rect x="2756.2" y="1003.0" width="8" height="20" rx="4" fill="#3d8af7"/>
<circle cx="2762.8" cy="1007.0" r="3.7" fill="#3d8af7" stroke="#000" stroke-opacity="0.45" stroke-width="0.8"/>
<circle cx="2762.8" cy="1013.0" r="3.7" fill="#3d8af7" stroke="#000" stroke-opacity="0.45" stroke-width="0.8"/>
<circle cx="2762.8" cy="1019.0" r="3.7" fill="#3d8af7" stroke="#000" stroke-opacity="0.45" stroke-width="0.8"/>
<text x="2726.2" y="1017.4" font-size="12.79" fill="#e6e6e6" textLength="18.6" lengthAdjust="spacingAndGlyphs">Out</text>
<path d="M2697.5,1036.1 L2703.0,1041.6 L2708.5,1036.1" fill="none" stroke="#f4f4f4" stroke-width="2.2"/>
<rect x="2817.6" y="971.8" width="182.0" height="78.5" rx="6" fill="url(#nbody)" fill-opacity="0.85" stroke="#080808" stroke-width="1.7" filter="url(#nshadow)"/>
<path d="M2819.1,995.2 V978.3 Q2819.1,973.3 2824.1,973.3 H2993.1 Q2998.1,973.3 2998.1,978.3 V995.2 Z" fill="url(#hg_teal)"/>
<path d="M2819.1,995.2 V978.3 Q2819.1,973.3 2824.1,973.3 H2993.1 Q2998.1,973.3 2998.1,978.3 V995.2 Z" fill="url(#hgv)"/>
<path d="M2819.6,979.3 Q2819.6,974.1 2825.1,974.1 H2992.1 Q2997.6,974.1 2997.6,979.3" fill="none" stroke="#ffffff" stroke-opacity="0.35" stroke-width="1.2"/>
<text x="2831.6" y="989.1" font-size="14.97" font-weight="700" fill="#d6d6d6" textLength="132.5" lengthAdjust="spacingAndGlyphs">Static Mesh Spawner</text>
<rect x="2843.0" y="1011.5" width="3.6" height="13" rx="1.5" fill="#3d8af7" fill-opacity="0.7"/>
<rect x="2839.2" y="1006.5" width="4" height="17" rx="2" fill="#3d8af7" fill-opacity="0.85"/>
<rect x="2835.0" y="1003.0" width="5" height="20" rx="2.5" fill="#3d8af7"/>
<circle cx="2833.2" cy="1007.5" r="3.8" fill="#3d8af7" stroke="#000" stroke-opacity="0.45" stroke-width="0.8"/>
<circle cx="2833.2" cy="1012.5" r="3.8" fill="#3d8af7" stroke="#000" stroke-opacity="0.45" stroke-width="0.8"/>
<circle cx="2833.2" cy="1017.8" r="3.8" fill="#3d8af7" stroke="#000" stroke-opacity="0.45" stroke-width="0.8"/>
<text x="2854.6" y="1017.4" font-size="12.79" fill="#e6e6e6" textLength="9.7" lengthAdjust="spacingAndGlyphs">In</text>
<rect x="2974.2" y="1003.0" width="8" height="20" rx="4" fill="#3d8af7"/>
<circle cx="2980.8" cy="1007.0" r="3.4" fill="#050a14" stroke="#3d8af7" stroke-width="1.4"/>
<circle cx="2980.8" cy="1013.0" r="3.4" fill="#050a14" stroke="#3d8af7" stroke-width="1.4"/>
<circle cx="2980.8" cy="1019.0" r="3.4" fill="#050a14" stroke="#3d8af7" stroke-width="1.4"/>
<text x="2944.2" y="1017.4" font-size="12.79" fill="#e6e6e6" textLength="18.6" lengthAdjust="spacingAndGlyphs">Out</text>
<path d="M2903.6,1036.1 L2909.1,1041.6 L2914.6,1036.1" fill="none" stroke="#f4f4f4" stroke-width="2.2"/>
<rect x="1926.6" y="987.6" width="143.4" height="35.5" rx="17.5" fill="url(#tpbody)" fill-opacity="0.62" stroke="#080808" stroke-width="2" filter="url(#nshadow)"/>
<path d="M1929.6,999.6 Q1932.6,990.1 1943.6,989.8 H2053.0 Q2064.0,990.1 2067.0,999.6" fill="none" stroke="#ffffff" stroke-opacity="0.4" stroke-width="1.2"/>
<rect x="1940.1" y="995.6" width="13" height="19.5" rx="4" fill="#8a8a8a" stroke="#f2f2f2" stroke-width="1.5"/>
<circle cx="1950.7" cy="1005.4" r="5.6" fill="#ffffff"/>
<text x="1972.6" y="1010.4" font-size="15.26" font-weight="700" fill="#f4f4f4" textLength="52.8" lengthAdjust="spacingAndGlyphs">To Point</text>
<rect x="2044.4" y="995.4" width="8" height="20" rx="4" fill="#3d8af7"/>
<circle cx="2051.0" cy="999.4" r="3.7" fill="#3d8af7" stroke="#000" stroke-opacity="0.45" stroke-width="0.8"/>
<circle cx="2051.0" cy="1005.4" r="3.7" fill="#3d8af7" stroke="#000" stroke-opacity="0.45" stroke-width="0.8"/>
<circle cx="2051.0" cy="1011.4" r="3.7" fill="#3d8af7" stroke="#000" stroke-opacity="0.45" stroke-width="0.8"/>
<rect x="2428.7" y="987.5" width="143.4" height="35.5" rx="17.5" fill="url(#tpbody)" fill-opacity="0.62" stroke="#080808" stroke-width="2" filter="url(#nshadow)"/>
<path d="M2431.7,999.5 Q2434.7,990.0 2445.7,989.7 H2555.1 Q2566.1,990.0 2569.1,999.5" fill="none" stroke="#ffffff" stroke-opacity="0.4" stroke-width="1.2"/>
<rect x="2442.2" y="995.5" width="13" height="19.5" rx="4" fill="#8a8a8a" stroke="#f2f2f2" stroke-width="1.5"/>
<circle cx="2452.8" cy="1005.3" r="5.6" fill="#ffffff"/>
<text x="2474.7" y="1010.3" font-size="15.26" font-weight="700" fill="#f4f4f4" textLength="52.8" lengthAdjust="spacingAndGlyphs">To Point</text>
<rect x="2546.5" y="995.3" width="8" height="20" rx="4" fill="#3d8af7"/>
<circle cx="2553.1" cy="999.3" r="3.7" fill="#3d8af7" stroke="#000" stroke-opacity="0.45" stroke-width="0.8"/>
<circle cx="2553.1" cy="1005.3" r="3.7" fill="#3d8af7" stroke="#000" stroke-opacity="0.45" stroke-width="0.8"/>
<circle cx="2553.1" cy="1011.3" r="3.7" fill="#3d8af7" stroke="#000" stroke-opacity="0.45" stroke-width="0.8"/>
<rect x="1473.4" y="1343.5" width="158.3" height="78.5" rx="6" fill="url(#nbody)" fill-opacity="0.85" stroke="#080808" stroke-width="1.7" filter="url(#nshadow)"/>
<path d="M1474.9,1366.9 V1350.0 Q1474.9,1345.0 1479.9,1345.0 H1625.2 Q1630.2,1345.0 1630.2,1350.0 V1366.9 Z" fill="url(#hg_mag)"/>
<path d="M1474.9,1366.9 V1350.0 Q1474.9,1345.0 1479.9,1345.0 H1625.2 Q1630.2,1345.0 1630.2,1350.0 V1366.9 Z" fill="url(#hgv)"/>
<path d="M1475.4,1351.0 Q1475.4,1345.8 1480.9,1345.8 H1624.2 Q1629.7,1345.8 1629.7,1351.0" fill="none" stroke="#ffffff" stroke-opacity="0.35" stroke-width="1.2"/>
<text x="1487.4" y="1360.8" font-size="14.97" font-weight="700" fill="#d6d6d6" textLength="110.0" lengthAdjust="spacingAndGlyphs">Transform Points</text>
<rect x="1498.8" y="1383.2" width="3.6" height="13" rx="1.5" fill="#3d8af7" fill-opacity="0.7"/>
<rect x="1495.0" y="1378.2" width="4" height="17" rx="2" fill="#3d8af7" fill-opacity="0.85"/>
<rect x="1490.8" y="1374.7" width="5" height="20" rx="2.5" fill="#3d8af7"/>
<circle cx="1489.0" cy="1379.2" r="3.8" fill="#3d8af7" stroke="#000" stroke-opacity="0.45" stroke-width="0.8"/>
<circle cx="1489.0" cy="1384.2" r="3.8" fill="#3d8af7" stroke="#000" stroke-opacity="0.45" stroke-width="0.8"/>
<circle cx="1489.0" cy="1389.5" r="3.8" fill="#3d8af7" stroke="#000" stroke-opacity="0.45" stroke-width="0.8"/>
<text x="1510.4" y="1389.1" font-size="12.79" fill="#e6e6e6" textLength="9.7" lengthAdjust="spacingAndGlyphs">In</text>
<rect x="1606.3" y="1374.7" width="8" height="20" rx="4" fill="#3d8af7"/>
<circle cx="1612.9" cy="1378.7" r="3.7" fill="#3d8af7" stroke="#000" stroke-opacity="0.45" stroke-width="0.8"/>
<circle cx="1612.9" cy="1384.7" r="3.7" fill="#3d8af7" stroke="#000" stroke-opacity="0.45" stroke-width="0.8"/>
<circle cx="1612.9" cy="1390.7" r="3.7" fill="#3d8af7" stroke="#000" stroke-opacity="0.45" stroke-width="0.8"/>
<text x="1576.3" y="1389.1" font-size="12.79" fill="#e6e6e6" textLength="18.6" lengthAdjust="spacingAndGlyphs">Out</text>
<path d="M1547.6,1407.8 L1553.1,1413.3 L1558.6,1407.8" fill="none" stroke="#f4f4f4" stroke-width="2.2"/>
<rect x="1683.7" y="1327.8" width="173.6" height="109.0" rx="6" fill="url(#nbody)" fill-opacity="0.85" stroke="#080808" stroke-width="1.7" filter="url(#nshadow)"/>
<path d="M1685.2,1351.3 V1334.3 Q1685.2,1329.3 1690.2,1329.3 H1850.8 Q1855.8,1329.3 1855.8,1334.3 V1351.3 Z" fill="url(#hg_mag)"/>
<path d="M1685.2,1351.3 V1334.3 Q1685.2,1329.3 1690.2,1329.3 H1850.8 Q1855.8,1329.3 1855.8,1334.3 V1351.3 Z" fill="url(#hgv)"/>
<path d="M1685.7,1335.3 Q1685.7,1330.1 1691.2,1330.1 H1849.8 Q1855.3,1330.1 1855.3,1335.3" fill="none" stroke="#ffffff" stroke-opacity="0.35" stroke-width="1.2"/>
<text x="1697.7" y="1345.1" font-size="14.97" font-weight="700" fill="#d6d6d6" textLength="63.5" lengthAdjust="spacingAndGlyphs">Difference</text>
<rect x="1697.4" y="1359.5" width="13" height="19.5" rx="4" fill="#8a8a8a" stroke="#f2f2f2" stroke-width="1.5"/>
<circle cx="1707.9" cy="1369.2" r="5.6" fill="#ffffff"/>
<text x="1721.0" y="1373.6" font-size="12.79" fill="#e6e6e6" textLength="36.7" lengthAdjust="spacingAndGlyphs">Source</text>
<text x="1800.7" y="1373.6" font-size="12.79" fill="#e6e6e6" textLength="18.5" lengthAdjust="spacingAndGlyphs">Out</text>
<rect x="1830.5" y="1359.5" width="13" height="19.5" rx="4" fill="#8a8a8a" stroke="#f2f2f2" stroke-width="1.5"/>
<circle cx="1832.7" cy="1369.2" r="5.6" fill="#ffffff"/>
<rect x="1697.4" y="1390.5" width="13" height="19.5" rx="4" fill="#8a8a8a" stroke="#f2f2f2" stroke-width="1.5"/>
<circle cx="1707.9" cy="1400.2" r="5.6" fill="#ffffff"/>
<text x="1721.0" y="1404.6" font-size="12.79" fill="#e6e6e6" textLength="60.0" lengthAdjust="spacingAndGlyphs">Differences</text>
<path d="M1765.6,1422.6 L1771.1,1428.1 L1776.6,1422.6" fill="none" stroke="#f4f4f4" stroke-width="2.2"/>
<rect x="2104.3" y="1311.5" width="206.0" height="109.0" rx="6" fill="url(#nbody)" fill-opacity="0.85" stroke="#080808" stroke-width="1.7" filter="url(#nshadow)"/>
<path d="M2105.8,1335.0 V1318.0 Q2105.8,1313.0 2110.8,1313.0 H2303.8 Q2308.8,1313.0 2308.8,1318.0 V1335.0 Z" fill="url(#hg_mag)"/>
<path d="M2105.8,1335.0 V1318.0 Q2105.8,1313.0 2110.8,1313.0 H2303.8 Q2308.8,1313.0 2308.8,1318.0 V1335.0 Z" fill="url(#hgv)"/>
<path d="M2106.3,1319.0 Q2106.3,1313.8 2111.8,1313.8 H2302.8 Q2308.3,1313.8 2308.3,1319.0" fill="none" stroke="#ffffff" stroke-opacity="0.35" stroke-width="1.2"/>
<text x="2118.3" y="1328.8" font-size="14.97" font-weight="700" fill="#d6d6d6" textLength="64.4" lengthAdjust="spacingAndGlyphs">Projection</text>
<rect x="2129.9" y="1351.4" width="3.6" height="13" rx="1.5" fill="#a898f0" fill-opacity="0.7"/>
<rect x="2126.1" y="1346.4" width="4" height="17" rx="2" fill="#a898f0" fill-opacity="0.85"/>
<rect x="2121.9" y="1342.9" width="5" height="20" rx="2.5" fill="#a898f0"/>
<circle cx="2120.1" cy="1347.4" r="3.8" fill="#a898f0" stroke="#000" stroke-opacity="0.45" stroke-width="0.8"/>
<circle cx="2120.1" cy="1352.4" r="3.8" fill="#a898f0" stroke="#000" stroke-opacity="0.45" stroke-width="0.8"/>
<circle cx="2120.1" cy="1357.7" r="3.8" fill="#a898f0" stroke="#000" stroke-opacity="0.45" stroke-width="0.8"/>
<text x="2141.1" y="1357.3" font-size="12.79" fill="#e6e6e6" textLength="9.7" lengthAdjust="spacingAndGlyphs">In</text>
<text x="2253.6" y="1357.3" font-size="12.79" fill="#e6e6e6" textLength="19.2" lengthAdjust="spacingAndGlyphs">Out</text>
<rect x="2283.6" y="1343.2" width="13" height="19.5" rx="4" fill="#8a8a8a" stroke="#f2f2f2" stroke-width="1.5"/>
<circle cx="2285.7" cy="1352.9" r="5.6" fill="#ffffff"/>
<circle cx="2125.0" cy="1383.9" r="5.4" fill="#a898f0"/>
<text x="2141.1" y="1388.3" font-size="12.79" fill="#e6e6e6" textLength="92.6" lengthAdjust="spacingAndGlyphs">Projection Target</text>
<path d="M2202.1,1406.3 L2207.6,1411.8 L2213.1,1406.3" fill="none" stroke="#f4f4f4" stroke-width="2.2"/>
<rect x="2607.3" y="1327.8" width="158.3" height="78.5" rx="6" fill="url(#nbody)" fill-opacity="0.85" stroke="#080808" stroke-width="1.7" filter="url(#nshadow)"/>
<path d="M2608.8,1351.2 V1334.3 Q2608.8,1329.3 2613.8,1329.3 H2759.1 Q2764.1,1329.3 2764.1,1334.3 V1351.2 Z" fill="url(#hg_mag)"/>
<path d="M2608.8,1351.2 V1334.3 Q2608.8,1329.3 2613.8,1329.3 H2759.1 Q2764.1,1329.3 2764.1,1334.3 V1351.2 Z" fill="url(#hgv)"/>
<path d="M2609.3,1335.3 Q2609.3,1330.1 2614.8,1330.1 H2758.1 Q2763.6,1330.1 2763.6,1335.3" fill="none" stroke="#ffffff" stroke-opacity="0.35" stroke-width="1.2"/>
<text x="2621.3" y="1345.1" font-size="14.97" font-weight="700" fill="#d6d6d6" textLength="110.0" lengthAdjust="spacingAndGlyphs">Transform Points</text>
<rect x="2632.7" y="1367.5" width="3.6" height="13" rx="1.5" fill="#3d8af7" fill-opacity="0.7"/>
<rect x="2628.9" y="1362.5" width="4" height="17" rx="2" fill="#3d8af7" fill-opacity="0.85"/>
<rect x="2624.7" y="1359.0" width="5" height="20" rx="2.5" fill="#3d8af7"/>
<circle cx="2622.9" cy="1363.5" r="3.8" fill="#3d8af7" stroke="#000" stroke-opacity="0.45" stroke-width="0.8"/>
<circle cx="2622.9" cy="1368.5" r="3.8" fill="#3d8af7" stroke="#000" stroke-opacity="0.45" stroke-width="0.8"/>
<circle cx="2622.9" cy="1373.8" r="3.8" fill="#3d8af7" stroke="#000" stroke-opacity="0.45" stroke-width="0.8"/>
<text x="2644.3" y="1373.4" font-size="12.79" fill="#e6e6e6" textLength="9.7" lengthAdjust="spacingAndGlyphs">In</text>
<rect x="2740.2" y="1359.0" width="8" height="20" rx="4" fill="#3d8af7"/>
<circle cx="2746.8" cy="1363.0" r="3.7" fill="#3d8af7" stroke="#000" stroke-opacity="0.45" stroke-width="0.8"/>
<circle cx="2746.8" cy="1369.0" r="3.7" fill="#3d8af7" stroke="#000" stroke-opacity="0.45" stroke-width="0.8"/>
<circle cx="2746.8" cy="1375.0" r="3.7" fill="#3d8af7" stroke="#000" stroke-opacity="0.45" stroke-width="0.8"/>
<text x="2710.2" y="1373.4" font-size="12.79" fill="#e6e6e6" textLength="18.6" lengthAdjust="spacingAndGlyphs">Out</text>
<path d="M2681.5,1392.1 L2687.0,1397.6 L2692.5,1392.1" fill="none" stroke="#f4f4f4" stroke-width="2.2"/>
<rect x="2801.0" y="1327.8" width="182.0" height="78.5" rx="6" fill="url(#nbody)" fill-opacity="0.85" stroke="#080808" stroke-width="1.7" filter="url(#nshadow)"/>
<path d="M2802.5,1351.2 V1334.3 Q2802.5,1329.3 2807.5,1329.3 H2976.5 Q2981.5,1329.3 2981.5,1334.3 V1351.2 Z" fill="url(#hg_teal)"/>
<path d="M2802.5,1351.2 V1334.3 Q2802.5,1329.3 2807.5,1329.3 H2976.5 Q2981.5,1329.3 2981.5,1334.3 V1351.2 Z" fill="url(#hgv)"/>
<path d="M2803.0,1335.3 Q2803.0,1330.1 2808.5,1330.1 H2975.5 Q2981.0,1330.1 2981.0,1335.3" fill="none" stroke="#ffffff" stroke-opacity="0.35" stroke-width="1.2"/>
<text x="2815.0" y="1345.1" font-size="14.97" font-weight="700" fill="#d6d6d6" textLength="132.5" lengthAdjust="spacingAndGlyphs">Static Mesh Spawner</text>
<rect x="2826.4" y="1367.5" width="3.6" height="13" rx="1.5" fill="#3d8af7" fill-opacity="0.7"/>
<rect x="2822.6" y="1362.5" width="4" height="17" rx="2" fill="#3d8af7" fill-opacity="0.85"/>
<rect x="2818.4" y="1359.0" width="5" height="20" rx="2.5" fill="#3d8af7"/>
<circle cx="2816.6" cy="1363.5" r="3.8" fill="#3d8af7" stroke="#000" stroke-opacity="0.45" stroke-width="0.8"/>
<circle cx="2816.6" cy="1368.5" r="3.8" fill="#3d8af7" stroke="#000" stroke-opacity="0.45" stroke-width="0.8"/>
<circle cx="2816.6" cy="1373.8" r="3.8" fill="#3d8af7" stroke="#000" stroke-opacity="0.45" stroke-width="0.8"/>
<text x="2838.0" y="1373.4" font-size="12.79" fill="#e6e6e6" textLength="9.7" lengthAdjust="spacingAndGlyphs">In</text>
<rect x="2957.6" y="1359.0" width="8" height="20" rx="4" fill="#3d8af7"/>
<circle cx="2964.2" cy="1363.0" r="3.4" fill="#050a14" stroke="#3d8af7" stroke-width="1.4"/>
<circle cx="2964.2" cy="1369.0" r="3.4" fill="#050a14" stroke="#3d8af7" stroke-width="1.4"/>
<circle cx="2964.2" cy="1375.0" r="3.4" fill="#050a14" stroke="#3d8af7" stroke-width="1.4"/>
<text x="2927.6" y="1373.4" font-size="12.79" fill="#e6e6e6" textLength="18.6" lengthAdjust="spacingAndGlyphs">Out</text>
<path d="M2887.0,1392.1 L2892.5,1397.6 L2898.0,1392.1" fill="none" stroke="#f4f4f4" stroke-width="2.2"/>
<rect x="1894.6" y="1343.1" width="143.4" height="35.5" rx="17.5" fill="url(#tpbody)" fill-opacity="0.62" stroke="#080808" stroke-width="2" filter="url(#nshadow)"/>
<path d="M1897.6,1355.1 Q1900.6,1345.6 1911.6,1345.3 H2021.0 Q2032.0,1345.6 2035.0,1355.1" fill="none" stroke="#ffffff" stroke-opacity="0.4" stroke-width="1.2"/>
<rect x="1908.1" y="1351.1" width="13" height="19.5" rx="4" fill="#8a8a8a" stroke="#f2f2f2" stroke-width="1.5"/>
<circle cx="1918.7" cy="1360.9" r="5.6" fill="#ffffff"/>
<text x="1940.6" y="1365.9" font-size="15.26" font-weight="700" fill="#f4f4f4" textLength="52.8" lengthAdjust="spacingAndGlyphs">To Point</text>
<rect x="2012.4" y="1350.9" width="8" height="20" rx="4" fill="#3d8af7"/>
<circle cx="2019.0" cy="1354.9" r="3.7" fill="#3d8af7" stroke="#000" stroke-opacity="0.45" stroke-width="0.8"/>
<circle cx="2019.0" cy="1360.9" r="3.7" fill="#3d8af7" stroke="#000" stroke-opacity="0.45" stroke-width="0.8"/>
<circle cx="2019.0" cy="1366.9" r="3.7" fill="#3d8af7" stroke="#000" stroke-opacity="0.45" stroke-width="0.8"/>
<rect x="2397.0" y="1344.2" width="143.4" height="35.5" rx="17.5" fill="url(#tpbody)" fill-opacity="0.62" stroke="#080808" stroke-width="2" filter="url(#nshadow)"/>
<path d="M2400.0,1356.2 Q2403.0,1346.7 2414.0,1346.4 H2523.4 Q2534.4,1346.7 2537.4,1356.2" fill="none" stroke="#ffffff" stroke-opacity="0.4" stroke-width="1.2"/>
<rect x="2410.6" y="1352.2" width="13" height="19.5" rx="4" fill="#8a8a8a" stroke="#f2f2f2" stroke-width="1.5"/>
<circle cx="2421.1" cy="1362.0" r="5.6" fill="#ffffff"/>
<text x="2443.0" y="1367.0" font-size="15.26" font-weight="700" fill="#f4f4f4" textLength="52.8" lengthAdjust="spacingAndGlyphs">To Point</text>
<rect x="2514.8" y="1352.0" width="8" height="20" rx="4" fill="#3d8af7"/>
<circle cx="2521.4" cy="1356.0" r="3.7" fill="#3d8af7" stroke="#000" stroke-opacity="0.45" stroke-width="0.8"/>
<circle cx="2521.4" cy="1362.0" r="3.7" fill="#3d8af7" stroke="#000" stroke-opacity="0.45" stroke-width="0.8"/>
<circle cx="2521.4" cy="1368.0" r="3.7" fill="#3d8af7" stroke="#000" stroke-opacity="0.45" stroke-width="0.8"/>
<rect x="1456.0" y="1619.2" width="158.3" height="78.5" rx="6" fill="url(#nbody)" fill-opacity="0.85" stroke="#080808" stroke-width="1.7" filter="url(#nshadow)"/>
<path d="M1457.5,1642.6 V1625.7 Q1457.5,1620.7 1462.5,1620.7 H1607.8 Q1612.8,1620.7 1612.8,1625.7 V1642.6 Z" fill="url(#hg_mag)"/>
<path d="M1457.5,1642.6 V1625.7 Q1457.5,1620.7 1462.5,1620.7 H1607.8 Q1612.8,1620.7 1612.8,1625.7 V1642.6 Z" fill="url(#hgv)"/>
<path d="M1458.0,1626.7 Q1458.0,1621.5 1463.5,1621.5 H1606.8 Q1612.3,1621.5 1612.3,1626.7" fill="none" stroke="#ffffff" stroke-opacity="0.35" stroke-width="1.2"/>
<text x="1470.0" y="1636.5" font-size="14.97" font-weight="700" fill="#d6d6d6" textLength="110.0" lengthAdjust="spacingAndGlyphs">Transform Points</text>
<rect x="1481.4" y="1658.9" width="3.6" height="13" rx="1.5" fill="#3d8af7" fill-opacity="0.7"/>
<rect x="1477.6" y="1653.9" width="4" height="17" rx="2" fill="#3d8af7" fill-opacity="0.85"/>
<rect x="1473.4" y="1650.4" width="5" height="20" rx="2.5" fill="#3d8af7"/>
<circle cx="1471.6" cy="1654.9" r="3.8" fill="#3d8af7" stroke="#000" stroke-opacity="0.45" stroke-width="0.8"/>
<circle cx="1471.6" cy="1659.9" r="3.8" fill="#3d8af7" stroke="#000" stroke-opacity="0.45" stroke-width="0.8"/>
<circle cx="1471.6" cy="1665.2" r="3.8" fill="#3d8af7" stroke="#000" stroke-opacity="0.45" stroke-width="0.8"/>
<text x="1493.0" y="1664.8" font-size="12.79" fill="#e6e6e6" textLength="9.7" lengthAdjust="spacingAndGlyphs">In</text>
<rect x="1588.9" y="1650.4" width="8" height="20" rx="4" fill="#3d8af7"/>
<circle cx="1595.5" cy="1654.4" r="3.7" fill="#3d8af7" stroke="#000" stroke-opacity="0.45" stroke-width="0.8"/>
<circle cx="1595.5" cy="1660.4" r="3.7" fill="#3d8af7" stroke="#000" stroke-opacity="0.45" stroke-width="0.8"/>
<circle cx="1595.5" cy="1666.4" r="3.7" fill="#3d8af7" stroke="#000" stroke-opacity="0.45" stroke-width="0.8"/>
<text x="1558.9" y="1664.8" font-size="12.79" fill="#e6e6e6" textLength="18.6" lengthAdjust="spacingAndGlyphs">Out</text>
<path d="M1530.2,1683.5 L1535.7,1689.0 L1541.2,1683.5" fill="none" stroke="#f4f4f4" stroke-width="2.2"/>
<rect x="1683.7" y="1602.9" width="173.6" height="109.0" rx="6" fill="url(#nbody)" fill-opacity="0.85" stroke="#080808" stroke-width="1.7" filter="url(#nshadow)"/>
<path d="M1685.2,1626.4 V1609.4 Q1685.2,1604.4 1690.2,1604.4 H1850.8 Q1855.8,1604.4 1855.8,1609.4 V1626.4 Z" fill="url(#hg_mag)"/>
<path d="M1685.2,1626.4 V1609.4 Q1685.2,1604.4 1690.2,1604.4 H1850.8 Q1855.8,1604.4 1855.8,1609.4 V1626.4 Z" fill="url(#hgv)"/>
<path d="M1685.7,1610.4 Q1685.7,1605.2 1691.2,1605.2 H1849.8 Q1855.3,1605.2 1855.3,1610.4" fill="none" stroke="#ffffff" stroke-opacity="0.35" stroke-width="1.2"/>
<text x="1697.7" y="1620.2" font-size="14.97" font-weight="700" fill="#d6d6d6" textLength="63.5" lengthAdjust="spacingAndGlyphs">Difference</text>
<rect x="1697.4" y="1634.6" width="13" height="19.5" rx="4" fill="#8a8a8a" stroke="#f2f2f2" stroke-width="1.5"/>
<circle cx="1707.9" cy="1644.3" r="5.6" fill="#ffffff"/>
<text x="1721.0" y="1648.7" font-size="12.79" fill="#e6e6e6" textLength="36.7" lengthAdjust="spacingAndGlyphs">Source</text>
<text x="1800.7" y="1648.7" font-size="12.79" fill="#e6e6e6" textLength="18.5" lengthAdjust="spacingAndGlyphs">Out</text>
<rect x="1830.5" y="1634.6" width="13" height="19.5" rx="4" fill="#8a8a8a" stroke="#f2f2f2" stroke-width="1.5"/>
<circle cx="1832.7" cy="1644.3" r="5.6" fill="#ffffff"/>
<rect x="1697.4" y="1665.6" width="13" height="19.5" rx="4" fill="#8a8a8a" stroke="#f2f2f2" stroke-width="1.5"/>
<circle cx="1707.9" cy="1675.3" r="5.6" fill="#ffffff"/>
<text x="1721.0" y="1679.7" font-size="12.79" fill="#e6e6e6" textLength="60.0" lengthAdjust="spacingAndGlyphs">Differences</text>
<path d="M1765.6,1697.7 L1771.1,1703.2 L1776.6,1697.7" fill="none" stroke="#f4f4f4" stroke-width="2.2"/>
<rect x="2121.2" y="1586.6" width="206.0" height="109.0" rx="6" fill="url(#nbody)" fill-opacity="0.85" stroke="#080808" stroke-width="1.7" filter="url(#nshadow)"/>
<path d="M2122.7,1610.1 V1593.1 Q2122.7,1588.1 2127.7,1588.1 H2320.7 Q2325.7,1588.1 2325.7,1593.1 V1610.1 Z" fill="url(#hg_mag)"/>
<path d="M2122.7,1610.1 V1593.1 Q2122.7,1588.1 2127.7,1588.1 H2320.7 Q2325.7,1588.1 2325.7,1593.1 V1610.1 Z" fill="url(#hgv)"/>
<path d="M2123.2,1594.1 Q2123.2,1588.9 2128.7,1588.9 H2319.7 Q2325.2,1588.9 2325.2,1594.1" fill="none" stroke="#ffffff" stroke-opacity="0.35" stroke-width="1.2"/>
<text x="2135.2" y="1603.9" font-size="14.97" font-weight="700" fill="#d6d6d6" textLength="64.4" lengthAdjust="spacingAndGlyphs">Projection</text>
<rect x="2146.8" y="1626.5" width="3.6" height="13" rx="1.5" fill="#a898f0" fill-opacity="0.7"/>
<rect x="2143.0" y="1621.5" width="4" height="17" rx="2" fill="#a898f0" fill-opacity="0.85"/>
<rect x="2138.8" y="1618.0" width="5" height="20" rx="2.5" fill="#a898f0"/>
<circle cx="2137.0" cy="1622.5" r="3.8" fill="#a898f0" stroke="#000" stroke-opacity="0.45" stroke-width="0.8"/>
<circle cx="2137.0" cy="1627.5" r="3.8" fill="#a898f0" stroke="#000" stroke-opacity="0.45" stroke-width="0.8"/>
<circle cx="2137.0" cy="1632.8" r="3.8" fill="#a898f0" stroke="#000" stroke-opacity="0.45" stroke-width="0.8"/>
<text x="2158.0" y="1632.4" font-size="12.79" fill="#e6e6e6" textLength="9.7" lengthAdjust="spacingAndGlyphs">In</text>
<text x="2270.5" y="1632.4" font-size="12.79" fill="#e6e6e6" textLength="19.2" lengthAdjust="spacingAndGlyphs">Out</text>
<rect x="2300.4" y="1618.2" width="13" height="19.5" rx="4" fill="#8a8a8a" stroke="#f2f2f2" stroke-width="1.5"/>
<circle cx="2302.6" cy="1628.0" r="5.6" fill="#ffffff"/>
<circle cx="2141.9" cy="1659.0" r="5.4" fill="#a898f0"/>
<text x="2158.0" y="1663.4" font-size="12.79" fill="#e6e6e6" textLength="92.6" lengthAdjust="spacingAndGlyphs">Projection Target</text>
<path d="M2219.0,1681.4 L2224.5,1686.9 L2230.0,1681.4" fill="none" stroke="#f4f4f4" stroke-width="2.2"/>
<rect x="2623.3" y="1602.8" width="158.3" height="78.5" rx="6" fill="url(#nbody)" fill-opacity="0.85" stroke="#080808" stroke-width="1.7" filter="url(#nshadow)"/>
<path d="M2624.8,1626.2 V1609.3 Q2624.8,1604.3 2629.8,1604.3 H2775.1 Q2780.1,1604.3 2780.1,1609.3 V1626.2 Z" fill="url(#hg_mag)"/>
<path d="M2624.8,1626.2 V1609.3 Q2624.8,1604.3 2629.8,1604.3 H2775.1 Q2780.1,1604.3 2780.1,1609.3 V1626.2 Z" fill="url(#hgv)"/>
<path d="M2625.3,1610.3 Q2625.3,1605.1 2630.8,1605.1 H2774.1 Q2779.6,1605.1 2779.6,1610.3" fill="none" stroke="#ffffff" stroke-opacity="0.35" stroke-width="1.2"/>
<text x="2637.3" y="1620.1" font-size="14.97" font-weight="700" fill="#d6d6d6" textLength="110.0" lengthAdjust="spacingAndGlyphs">Transform Points</text>
<rect x="2648.7" y="1642.5" width="3.6" height="13" rx="1.5" fill="#3d8af7" fill-opacity="0.7"/>
<rect x="2644.9" y="1637.5" width="4" height="17" rx="2" fill="#3d8af7" fill-opacity="0.85"/>
<rect x="2640.7" y="1634.0" width="5" height="20" rx="2.5" fill="#3d8af7"/>
<circle cx="2638.9" cy="1638.5" r="3.8" fill="#3d8af7" stroke="#000" stroke-opacity="0.45" stroke-width="0.8"/>
<circle cx="2638.9" cy="1643.5" r="3.8" fill="#3d8af7" stroke="#000" stroke-opacity="0.45" stroke-width="0.8"/>
<circle cx="2638.9" cy="1648.8" r="3.8" fill="#3d8af7" stroke="#000" stroke-opacity="0.45" stroke-width="0.8"/>
<text x="2660.3" y="1648.4" font-size="12.79" fill="#e6e6e6" textLength="9.7" lengthAdjust="spacingAndGlyphs">In</text>
<rect x="2756.2" y="1634.0" width="8" height="20" rx="4" fill="#3d8af7"/>
<circle cx="2762.8" cy="1638.0" r="3.7" fill="#3d8af7" stroke="#000" stroke-opacity="0.45" stroke-width="0.8"/>
<circle cx="2762.8" cy="1644.0" r="3.7" fill="#3d8af7" stroke="#000" stroke-opacity="0.45" stroke-width="0.8"/>
<circle cx="2762.8" cy="1650.0" r="3.7" fill="#3d8af7" stroke="#000" stroke-opacity="0.45" stroke-width="0.8"/>
<text x="2726.2" y="1648.4" font-size="12.79" fill="#e6e6e6" textLength="18.6" lengthAdjust="spacingAndGlyphs">Out</text>
<path d="M2697.5,1667.1 L2703.0,1672.6 L2708.5,1667.1" fill="none" stroke="#f4f4f4" stroke-width="2.2"/>
<rect x="2817.6" y="1602.8" width="182.0" height="78.5" rx="6" fill="url(#nbody)" fill-opacity="0.85" stroke="#080808" stroke-width="1.7" filter="url(#nshadow)"/>
<path d="M2819.1,1626.2 V1609.3 Q2819.1,1604.3 2824.1,1604.3 H2993.1 Q2998.1,1604.3 2998.1,1609.3 V1626.2 Z" fill="url(#hg_teal)"/>
<path d="M2819.1,1626.2 V1609.3 Q2819.1,1604.3 2824.1,1604.3 H2993.1 Q2998.1,1604.3 2998.1,1609.3 V1626.2 Z" fill="url(#hgv)"/>
<path d="M2819.6,1610.3 Q2819.6,1605.1 2825.1,1605.1 H2992.1 Q2997.6,1605.1 2997.6,1610.3" fill="none" stroke="#ffffff" stroke-opacity="0.35" stroke-width="1.2"/>
<text x="2831.6" y="1620.1" font-size="14.97" font-weight="700" fill="#d6d6d6" textLength="132.5" lengthAdjust="spacingAndGlyphs">Static Mesh Spawner</text>
<rect x="2843.0" y="1642.5" width="3.6" height="13" rx="1.5" fill="#3d8af7" fill-opacity="0.7"/>
<rect x="2839.2" y="1637.5" width="4" height="17" rx="2" fill="#3d8af7" fill-opacity="0.85"/>
<rect x="2835.0" y="1634.0" width="5" height="20" rx="2.5" fill="#3d8af7"/>
<circle cx="2833.2" cy="1638.5" r="3.8" fill="#3d8af7" stroke="#000" stroke-opacity="0.45" stroke-width="0.8"/>
<circle cx="2833.2" cy="1643.5" r="3.8" fill="#3d8af7" stroke="#000" stroke-opacity="0.45" stroke-width="0.8"/>
<circle cx="2833.2" cy="1648.8" r="3.8" fill="#3d8af7" stroke="#000" stroke-opacity="0.45" stroke-width="0.8"/>
<text x="2854.6" y="1648.4" font-size="12.79" fill="#e6e6e6" textLength="9.7" lengthAdjust="spacingAndGlyphs">In</text>
<rect x="2974.2" y="1634.0" width="8" height="20" rx="4" fill="#3d8af7"/>
<circle cx="2980.8" cy="1638.0" r="3.4" fill="#050a14" stroke="#3d8af7" stroke-width="1.4"/>
<circle cx="2980.8" cy="1644.0" r="3.4" fill="#050a14" stroke="#3d8af7" stroke-width="1.4"/>
<circle cx="2980.8" cy="1650.0" r="3.4" fill="#050a14" stroke="#3d8af7" stroke-width="1.4"/>
<text x="2944.2" y="1648.4" font-size="12.79" fill="#e6e6e6" textLength="18.6" lengthAdjust="spacingAndGlyphs">Out</text>
<path d="M2903.6,1667.1 L2909.1,1672.6 L2914.6,1667.1" fill="none" stroke="#f4f4f4" stroke-width="2.2"/>
<rect x="1910.3" y="1619.2" width="143.4" height="35.5" rx="17.5" fill="url(#tpbody)" fill-opacity="0.62" stroke="#080808" stroke-width="2" filter="url(#nshadow)"/>
<path d="M1913.3,1631.2 Q1916.3,1621.7 1927.3,1621.4 H2036.7 Q2047.7,1621.7 2050.7,1631.2" fill="none" stroke="#ffffff" stroke-opacity="0.4" stroke-width="1.2"/>
<rect x="1923.8" y="1627.2" width="13" height="19.5" rx="4" fill="#8a8a8a" stroke="#f2f2f2" stroke-width="1.5"/>
<circle cx="1934.4" cy="1637.0" r="5.6" fill="#ffffff"/>
<text x="1956.3" y="1642.0" font-size="15.26" font-weight="700" fill="#f4f4f4" textLength="52.8" lengthAdjust="spacingAndGlyphs">To Point</text>
<rect x="2028.1" y="1627.0" width="8" height="20" rx="4" fill="#3d8af7"/>
<circle cx="2034.7" cy="1631.0" r="3.7" fill="#3d8af7" stroke="#000" stroke-opacity="0.45" stroke-width="0.8"/>
<circle cx="2034.7" cy="1637.0" r="3.7" fill="#3d8af7" stroke="#000" stroke-opacity="0.45" stroke-width="0.8"/>
<circle cx="2034.7" cy="1643.0" r="3.7" fill="#3d8af7" stroke="#000" stroke-opacity="0.45" stroke-width="0.8"/>
<rect x="2413.0" y="1619.5" width="143.4" height="35.5" rx="17.5" fill="url(#tpbody)" fill-opacity="0.62" stroke="#080808" stroke-width="2" filter="url(#nshadow)"/>
<path d="M2416.0,1631.5 Q2419.0,1622.0 2430.0,1621.7 H2539.4 Q2550.4,1622.0 2553.4,1631.5" fill="none" stroke="#ffffff" stroke-opacity="0.4" stroke-width="1.2"/>
<rect x="2426.6" y="1627.5" width="13" height="19.5" rx="4" fill="#8a8a8a" stroke="#f2f2f2" stroke-width="1.5"/>
<circle cx="2437.1" cy="1637.3" r="5.6" fill="#ffffff"/>
<text x="2459.0" y="1642.3" font-size="15.26" font-weight="700" fill="#f4f4f4" textLength="52.8" lengthAdjust="spacingAndGlyphs">To Point</text>
<rect x="2530.8" y="1627.3" width="8" height="20" rx="4" fill="#3d8af7"/>
<circle cx="2537.4" cy="1631.3" r="3.7" fill="#3d8af7" stroke="#000" stroke-opacity="0.45" stroke-width="0.8"/>
<circle cx="2537.4" cy="1637.3" r="3.7" fill="#3d8af7" stroke="#000" stroke-opacity="0.45" stroke-width="0.8"/>
<circle cx="2537.4" cy="1643.3" r="3.7" fill="#3d8af7" stroke="#000" stroke-opacity="0.45" stroke-width="0.8"/>
<defs><linearGradient id="ulogo" x1="0" y1="0" x2="0" y2="1"><stop offset="0" stop-color="#8c8c8c"/><stop offset="0.45" stop-color="#b4b6b8"/><stop offset="0.6" stop-color="#9a9c9e"/><stop offset="1" stop-color="#5c6064"/></linearGradient><linearGradient id="uring" x1="0" y1="0" x2="1" y2="1"><stop offset="0" stop-color="#a0a0a0"/><stop offset="0.5" stop-color="#8a8a8a"/><stop offset="1" stop-color="#707070"/></linearGradient></defs>
<circle cx="41.5" cy="41.2" r="30.8" fill="#0e0e0e" stroke="url(#uring)" stroke-width="2.6"/>
<path d="M38.6,22.3 C32,24.5 26,30 23.5,36.5 L21.8,41.5 C23.5,39 26,37.5 28.4,37.5 L28.4,51 L26.3,53.3 C29.5,58.5 35,61.8 40.5,61.2 C44,60.8 47,58.8 50,59.2 C55.5,56.5 59.5,51.5 60.7,46.2 C58.5,48.5 56,49.3 53.3,49.2 L53.3,31.5 C54.5,28.3 56.3,25.5 58.1,24.1 C52,25.5 46.5,28 43.5,30.2 L44.3,30.5 L44.3,48.5 C42.5,50 40,50.5 38,50 L38,30 C38,27 38.3,24.5 38.6,22.3 Z" fill="url(#ulogo)"/>
<text x="101.0" y="24.0" font-size="21.37" fill="#c4c4c4" textLength="31.0" lengthAdjust="spacingAndGlyphs">File</text>
<text x="168.0" y="24.0" font-size="21.37" fill="#c4c4c4" textLength="32.8" lengthAdjust="spacingAndGlyphs">Edit</text>
<text x="238.8" y="24.0" font-size="21.37" fill="#c4c4c4" textLength="48.2" lengthAdjust="spacingAndGlyphs">Asset</text>
<text x="324.0" y="24.0" font-size="21.37" fill="#c4c4c4" textLength="69.7" lengthAdjust="spacingAndGlyphs">Window</text>
<text x="429.8" y="24.0" font-size="21.37" fill="#c4c4c4" textLength="47.7" lengthAdjust="spacingAndGlyphs">Tools</text>
<text x="514.0" y="24.0" font-size="21.37" fill="#c4c4c4" textLength="40.0" lengthAdjust="spacingAndGlyphs">Help</text>
<circle cx="121.4" cy="63.6" r="10.5" fill="none" stroke="#2fc0a0" stroke-width="2"/>
<path d="M121.4,56.5 L127.5,60 L127.5,67.2 L121.4,70.7 L115.3,67.2 L115.3,60 Z" fill="#2fc0a0"/>
<path d="M115.3,60 L121.4,63.6 L127.5,60 M121.4,63.6 V70.7" stroke="#0e4a40" stroke-width="1" fill="none"/>
<text x="147.5" y="69.9" font-size="22.09" fill="#e2e2e2" textLength="153.0" lengthAdjust="spacingAndGlyphs">PCG_Fence_V01*</text>
<path d="M381.5,58.5 L391,68.5 M391,58.5 L381.5,68.5" stroke="#c8c8c8" stroke-width="2.2"/>
<path d="M3675,26 H3690" stroke="#c8c8c8" stroke-width="1.6"/>
<rect x="3738.5" y="21.5" width="11" height="11" fill="none" stroke="#c8c8c8" stroke-width="1.5"/><path d="M3741.5,21.5 V18.6 H3752.8 V29.8 H3749.5" fill="none" stroke="#c8c8c8" stroke-width="1.5"/>
<path d="M3801,18 L3816,33.5 M3816,18 L3801,33.5" stroke="#c8c8c8" stroke-width="1.8"/>
<path d="M26,105 H47 L52.4,110.5 V131 H26 Z" fill="#a8a8a8"/><rect x="31" y="105" width="13" height="8" fill="#242424"/><rect x="38.5" y="106" width="3.5" height="6" fill="#a8a8a8"/><rect x="31" y="120" width="16.5" height="11" fill="#242424"/><rect x="32.5" y="121.5" width="13.5" height="9.5" fill="#a8a8a8"/>
<path d="M89.5,106 H98 L100.5,109 H108 V118 A9,9 0 0 0 103,131 H89.5 Z" fill="#a8a8a8"/><circle cx="113" cy="122.5" r="6.3" fill="none" stroke="#a8a8a8" stroke-width="2.2"/><path d="M108.5,127 L103.5,132" stroke="#a8a8a8" stroke-width="2.4"/>
<rect x="144.8" y="88.0" width="2.0" height="59.0" fill="#171717"/>
<rect x="165.8" y="88.0" width="2.0" height="59.0" fill="#171717"/>
<circle cx="210" cy="116" r="10" fill="none" stroke="#c0c0c0" stroke-width="2.2"/><path d="M203,123 L193.5,132.5" stroke="#c0c0c0" stroke-width="2.6"/><path d="M205,113 h3 v6 h-3 M211,111 h4 v4 h-4 z M211,118 h4 v4 h-4z" fill="none" stroke="#c0c0c0" stroke-width="1.4"/>
<text x="229.0" y="125.4" font-size="22.82" fill="#c8c8c8" textLength="36.5" lengthAdjust="spacingAndGlyphs">Find</text>
<rect x="307.5" y="106.5" width="5.0" height="23.5" fill="#c0c0c0"/>
<rect x="321.0" y="106.5" width="5.0" height="23.5" fill="#c0c0c0"/>
<text x="338.0" y="125.4" font-size="22.82" fill="#c8c8c8" textLength="114.5" lengthAdjust="spacingAndGlyphs">Pause Regen</text>
<path d="M493,112 A12,12 0 1 1 496,125" fill="none" stroke="#c0c0c0" stroke-width="2.6"/><path d="M489,104.5 L489.5,115 L499.5,113 Z" fill="#c0c0c0"/>
<text x="526.0" y="125.4" font-size="22.82" fill="#c8c8c8" textLength="107.0" lengthAdjust="spacingAndGlyphs">Force Regen</text>
<rect x="674.0" y="106.0" width="21.0" height="23.6" fill="#6a6a6a"/>
<text x="706.5" y="125.4" font-size="22.82" fill="#6a6a6a" textLength="150.2" lengthAdjust="spacingAndGlyphs">Cancel Execution</text>
<rect x="876.5" y="97.3" width="272" height="41.6" rx="4" fill="#0f0f0f" stroke="#343434" stroke-width="1.2"/>
<text x="887.0" y="125.4" font-size="22.82" fill="#d0d0d0" textLength="220.0" lengthAdjust="spacingAndGlyphs">No debug object selected</text>
<path d="M1118.5,113.5 L1124,119 L1129.5,113.5" fill="none" stroke="#d0d0d0" stroke-width="2"/>
<circle cx="1172.5" cy="118" r="10.5" fill="none" stroke="#c0c0c0" stroke-width="2.4"/><path d="M1178,118 H1167 M1171.5,113 L1166.5,118 L1171.5,123" fill="none" stroke="#c0c0c0" stroke-width="2.4"/>
<path d="M1206,106 H1213 L1215,108.5 H1222 V116 A8,8 0 0 0 1218,129 H1206 Z" fill="#6a6a6a"/><circle cx="1223.5" cy="121" r="5.5" fill="none" stroke="#6a6a6a" stroke-width="2"/><path d="M1219.5,125 L1215.5,129.5" stroke="#6a6a6a" stroke-width="2"/>
<path d="M1259,105 l4,4 M1267,105 l-4,4 M1263,103 v4" stroke="#6a6a6a" stroke-width="1.6"/><rect x="1266" y="113" width="7" height="6" fill="#6a6a6a"/><rect x="1260" y="121" width="8" height="6" fill="#6a6a6a"/><rect x="1279" y="114" width="9" height="7" fill="#6a6a6a"/><rect x="1279" y="124" width="9" height="7" fill="#6a6a6a"/><path d="M1268,124 H1275 V117.5 H1279 M1275,124 V127.5 H1279" fill="none" stroke="#6a6a6a" stroke-width="1.4"/>
<text x="1294.0" y="125.4" font-size="22.82" fill="#6a6a6a" textLength="214.0" lengthAdjust="spacingAndGlyphs">Graph Determinism Test</text>
<path d="M1546,106 h12 M1546,112 h9 M1552,125 h21 M1559,130 h14" stroke="#c0c0c0" stroke-width="1.5"/><path d="M1547,131 L1549,122 L1566,104.5 L1572.5,111 L1555,128.5 Z" fill="#c0c0c0"/>
<text x="1581.5" y="125.4" font-size="22.82" fill="#c8c8c8" textLength="131.0" lengthAdjust="spacingAndGlyphs">Graph Settings</text>
<rect x="1736.5" y="88.0" width="2.0" height="59.0" fill="#1b1b1b"/>
<path d="M6,156 H18 L6,168 Z" fill="#0a72e8"/>
<path d="M3105,156 H3117 L3105,168 Z" fill="#0a72e8"/>
<rect x="200.0" y="2040.0" width="2.5" height="48.0" fill="#151515"/>
<rect x="362.5" y="2040.0" width="2.5" height="48.0" fill="#151515"/>
<rect x="3427.0" y="2040.0" width="2.5" height="48.0" fill="#151515"/>
<rect x="3591.0" y="2040.0" width="2.5" height="48.0" fill="#151515"/>
<path d="M17,2053.5 H24 L26,2056 H32 V2062 A7,7 0 0 0 28,2072.5 H17 Z" fill="#a8a8a8"/><circle cx="34" cy="2066.5" r="5" fill="none" stroke="#a8a8a8" stroke-width="2"/><path d="M30.5,2070 L27,2074" stroke="#a8a8a8" stroke-width="2"/>
<text x="47.0" y="2071.8" font-size="23.69" fill="#c8c8c8" textLength="138.0" lengthAdjust="spacingAndGlyphs">Content Drawer</text>
<path d="M222,2053 h18 v20 h-18 z" fill="#a8a8a8"/><rect x="224.5" y="2051" width="2" height="4" fill="#a8a8a8"/><rect x="229" y="2051" width="2" height="4" fill="#a8a8a8"/><rect x="233.5" y="2051" width="2" height="4" fill="#a8a8a8"/><path d="M225,2060 l4,3 l-4,3 M230,2068 h6" fill="none" stroke="#242424" stroke-width="1.6"/>
<text x="249.0" y="2071.8" font-size="23.69" fill="#c8c8c8" textLength="98.0" lengthAdjust="spacingAndGlyphs">Output Log</text>
<rect x="388" y="2056" width="23" height="18" fill="none" stroke="#b8b8b8" stroke-width="1.8"/><path d="M392,2061 l5,3.5 l-5,3.5 M399,2070 h6" fill="none" stroke="#b8b8b8" stroke-width="1.6"/>
<text x="417.0" y="2071.8" font-size="23.69" fill="#c8c8c8" textLength="40.0" lengthAdjust="spacingAndGlyphs">Cmd</text>
<path d="M470.5,2063 L476.5,2069 L482.5,2063" fill="none" stroke="#c8c8c8" stroke-width="2"/>
<rect x="504" y="2048.5" width="448" height="30.5" rx="3" fill="#0f0f0f" stroke="#2e2e2e" stroke-width="1.2"/>
<text x="517.0" y="2070.0" font-size="19.19" fill="#5c5c5c" textLength="230.0" lengthAdjust="spacingAndGlyphs" style="font-family:'Liberation Mono',monospace">Enter Console Command</text>
<path d="M3448,2053 H3463 L3467,2057 V2073 H3448 Z" fill="#a8a8a8"/><rect x="3452" y="2053" width="9" height="6" fill="#242424"/><rect x="3457" y="2054" width="2.5" height="4" fill="#a8a8a8"/><path d="M3466,2064 v10 M3461.5,2066.5 l9,5 M3470.5,2066.5 l-9,5" stroke="#242424" stroke-width="4"/><path d="M3466,2064 v10 M3461.5,2066.5 l9,5 M3470.5,2066.5 l-9,5" stroke="#c8c8c8" stroke-width="1.8"/>
<text x="3479.0" y="2071.8" font-size="23.69" fill="#c8c8c8" textLength="92.0" lengthAdjust="spacingAndGlyphs">3 Unsaved</text>
<circle cx="3620" cy="2056" r="3" fill="#c8c8c8"/><circle cx="3633" cy="2056" r="3" fill="#c8c8c8"/><circle cx="3620" cy="2073" r="3" fill="#c8c8c8"/><path d="M3620,2056 V2073 M3633,2056 Q3633,2066 3620,2068" fill="none" stroke="#c8c8c8" stroke-width="1.8"/>
<text x="3647.0" y="2071.8" font-size="23.69" fill="#c8c8c8" textLength="143.0" lengthAdjust="spacingAndGlyphs">Revision Control</text>
<path d="M3800,2063 L3806,2069 L3812,2063" fill="none" stroke="#c8c8c8" stroke-width="2"/>
<g opacity="0.2">
<text x="2680.7" y="1995.7" font-size="99.56" font-weight="700" fill="#ffffff" textLength="396.3" lengthAdjust="spacingAndGlyphs" stroke="#ffffff" stroke-width="2" stroke-linejoin="round">PCG Graph</text>
</g>
<text x="2982.5" y="193.0" font-size="32.27" font-weight="700" fill="#ffffff" textLength="106.5" lengthAdjust="spacingAndGlyphs" fill-opacity="0.25">Zoom -3</text>
<path d="M2024.5,1802.5 L2024.5,1825.5 L2029.8,1820.2 L2033.8,1829 L2037.6,1827.3 L2033.8,1818.8 L2041.5,1818.8 Z" fill="#fff" stroke="#000" stroke-width="1.3"/>
</svg>
</body></html>
